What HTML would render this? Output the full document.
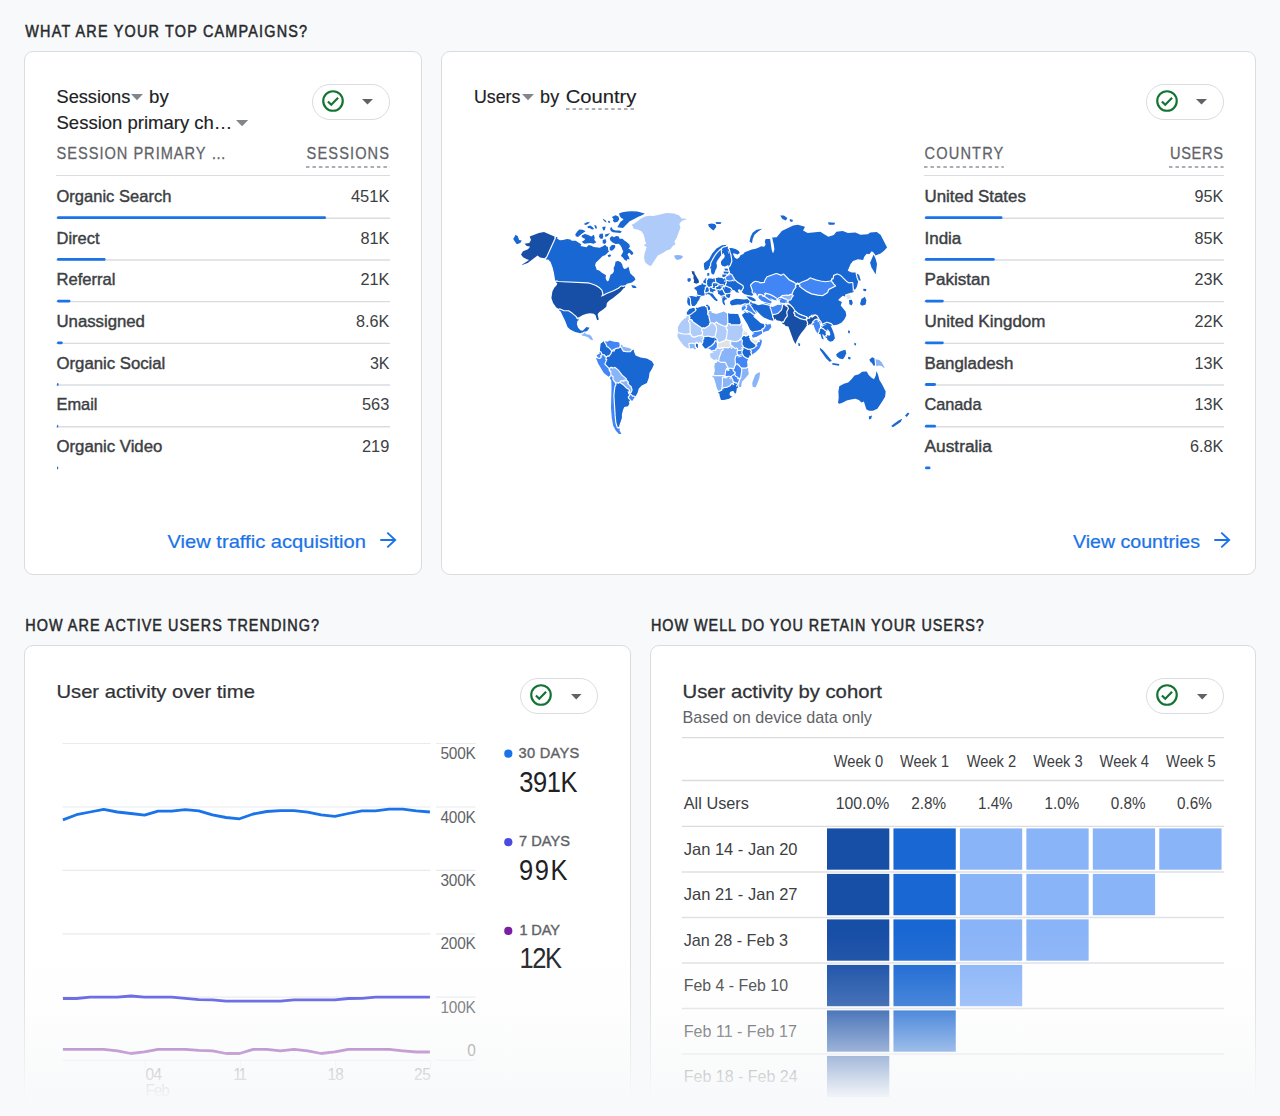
<!DOCTYPE html>
<html lang="en"><head><meta charset="utf-8"><title>Reports snapshot</title>
<meta name="viewport" content="width=1280">
<style>
html,body{margin:0;padding:0}
body{width:1280px;height:1116px;overflow:hidden;background:#f8f9fa;position:relative;font-family:"Liberation Sans",sans-serif;-webkit-font-smoothing:antialiased}
.t{position:absolute;white-space:pre;margin:0;padding:0;font-weight:400;display:block}
.r{position:absolute}
.card{position:absolute;background:#fff;border:1px solid #dadce0;border-radius:9px;box-sizing:border-box}
.pill{position:absolute;box-sizing:border-box;border:1px solid #dadce0;border-radius:18px;background:#fff}
svg{position:absolute;overflow:visible}
main,section,article{display:block;margin:0;padding:0}
</style></head>
<body>
<main>
<section aria-label="What are your top campaigns?">
<h2 class="t" style="left:25.30px;top:24px;font-size:14.4px;line-height:16px;height:16px;color:#27292d;letter-spacing:1.204px;-webkit-text-stroke:0.45px #27292d;transform:scaleY(1.12);transform-origin:0 13px;">WHAT ARE YOUR TOP CAMPAIGNS?</h2>
<article aria-label="Sessions by Session primary channel group">
<div class="card" style="left:24px;top:51px;width:398px;height:524px;"></div>
<span class="t" style="left:56.50px;top:87px;font-size:18.2px;line-height:20px;height:20px;color:#202124;-webkit-text-stroke:0.15px #202124;transform:scaleY(1.03);transform-origin:0 16px;">Sessions</span>
<svg style="left:131.1px;top:94px" width="12" height="6.2" viewBox="0 0 12 6.2"><path d="M0 0H12L6.0 6.2Z" fill="#80868b"/></svg>
<span class="t" style="left:149.10px;top:86px;font-size:18.7px;line-height:21px;height:21px;color:#202124;letter-spacing:-0.100px;-webkit-text-stroke:0.15px #202124;">by</span>
<span class="t" style="left:56.50px;top:112px;font-size:18.5px;line-height:21px;height:21px;color:#202124;-webkit-text-stroke:0.15px #202124;">Session primary ch…</span>
<svg style="left:236.4px;top:120px" width="12.2" height="6.3" viewBox="0 0 12.2 6.3"><path d="M0 0H12.2L6.1 6.3Z" fill="#80868b"/></svg>
<div class="pill" style="left:312px;top:84px;width:78px;height:36px"></div>
<svg style="left:320.40px;top:88.30px" width="26" height="26" viewBox="0 0 24 24"><circle cx="12" cy="12" r="9" fill="none" stroke="#137333" stroke-width="2"/><path d="M7.3 12.4l3.1 3.1 6.3-6.4" fill="none" stroke="#137333" stroke-width="2"/></svg>
<svg style="left:362.2px;top:99.4px" width="11" height="5.6" viewBox="0 0 11 5.6"><path d="M0 0H11L5.5 5.6Z" fill="#5f6368"/></svg>
<span class="t" style="left:56.50px;top:146px;font-size:14.6px;line-height:16px;height:16px;color:#5f6368;letter-spacing:0.994px;-webkit-text-stroke:0.25px #5f6368;transform:scaleY(1.075);transform-origin:0 13px;">SESSION PRIMARY …</span>
<span class="t" style="left:306.60px;top:146px;font-size:14.6px;line-height:16px;height:16px;color:#5f6368;letter-spacing:1.114px;-webkit-text-stroke:0.25px #5f6368;transform:scaleY(1.075);transform-origin:0 13px;">SESSIONS</span>
<svg style="left:306.0px;top:165.5px" width="84.0" height="2" ><line x1="0" y1="1" x2="84.0" y2="1" stroke="#8f959b" stroke-width="1.3" stroke-dasharray="3.5 2.95"/></svg>
<div class="r" style="left:56px;top:175px;width:334px;height:1px;background:#dadce0;"></div>
<span class="t" style="left:56.50px;top:187px;font-size:16.5px;line-height:18px;height:18px;color:#3c4043;letter-spacing:0.015px;-webkit-text-stroke:0.42px #3c4043;">Organic Search</span>
<span class="t" style="left:350.90px;top:187px;font-size:16.5px;line-height:18px;height:18px;color:#3c4043;">451K</span>
<svg style="left:0;top:0" width="1280" height="600" viewBox="0 0 1280 600"><path d="M56 218.25H390" stroke="#dadce0" stroke-width="1.4" fill="none"/><rect x="57" y="216.30" width="269.0" height="2.8" rx="1.40" fill="#1a73e8"/></svg>
<span class="t" style="left:56.50px;top:229px;font-size:16.5px;line-height:18px;height:18px;color:#3c4043;letter-spacing:-0.020px;-webkit-text-stroke:0.42px #3c4043;">Direct</span>
<span class="t" style="left:360.40px;top:229px;font-size:16.3px;line-height:18px;height:18px;color:#3c4043;">81K</span>
<svg style="left:0;top:0" width="1280" height="600" viewBox="0 0 1280 600"><path d="M56 259.95H390" stroke="#dadce0" stroke-width="1.4" fill="none"/><rect x="57" y="258.00" width="48.6" height="2.8" rx="1.40" fill="#1a73e8"/></svg>
<span class="t" style="left:56.50px;top:270px;font-size:16.6px;line-height:19px;height:19px;color:#3c4043;-webkit-text-stroke:0.42px #3c4043;">Referral</span>
<span class="t" style="left:360.40px;top:270px;font-size:16.3px;line-height:18px;height:18px;color:#3c4043;">21K</span>
<svg style="left:0;top:0" width="1280" height="600" viewBox="0 0 1280 600"><path d="M56 301.65H390" stroke="#dadce0" stroke-width="1.4" fill="none"/><rect x="57" y="299.70" width="13.5" height="2.8" rx="1.40" fill="#1a73e8"/></svg>
<span class="t" style="left:56.50px;top:312px;font-size:16.8px;line-height:19px;height:19px;color:#3c4043;letter-spacing:-0.022px;-webkit-text-stroke:0.42px #3c4043;transform:scaleY(0.978);transform-origin:0 15px;">Unassigned</span>
<span class="t" style="left:356.00px;top:312px;font-size:16.2px;line-height:18px;height:18px;color:#3c4043;letter-spacing:0.033px;">8.6K</span>
<svg style="left:0;top:0" width="1280" height="600" viewBox="0 0 1280 600"><path d="M56 343.35H390" stroke="#dadce0" stroke-width="1.4" fill="none"/><rect x="57" y="341.40" width="5.8" height="2.8" rx="1.40" fill="#1a73e8"/></svg>
<span class="t" style="left:56.50px;top:354px;font-size:16.8px;line-height:19px;height:19px;color:#3c4043;letter-spacing:-0.023px;-webkit-text-stroke:0.42px #3c4043;transform:scaleY(0.978);transform-origin:0 15px;">Organic Social</span>
<span class="t" style="left:370.00px;top:355px;font-size:16px;line-height:17px;height:17px;color:#3c4043;letter-spacing:-0.200px;">3K</span>
<svg style="left:0;top:0" width="1280" height="600" viewBox="0 0 1280 600"><path d="M56 385.05H390" stroke="#dadce0" stroke-width="1.4" fill="none"/><rect x="57" y="383.10" width="1.6" height="2.8" rx="0.80" fill="#1a73e8"/></svg>
<span class="t" style="left:56.50px;top:395px;font-size:16.4px;line-height:18px;height:18px;color:#3c4043;-webkit-text-stroke:0.42px #3c4043;">Email</span>
<span class="t" style="left:362.00px;top:395px;font-size:16.4px;line-height:18px;height:18px;color:#3c4043;">563</span>
<svg style="left:0;top:0" width="1280" height="600" viewBox="0 0 1280 600"><path d="M56 426.75H390" stroke="#dadce0" stroke-width="1.4" fill="none"/><rect x="57" y="424.80" width="1.2" height="2.8" rx="0.60" fill="#1a73e8"/></svg>
<span class="t" style="left:56.50px;top:437px;font-size:16.8px;line-height:19px;height:19px;color:#3c4043;letter-spacing:-0.017px;-webkit-text-stroke:0.42px #3c4043;transform:scaleY(0.978);transform-origin:0 15px;">Organic Video</span>
<span class="t" style="left:362.00px;top:437px;font-size:16.4px;line-height:18px;height:18px;color:#3c4043;">219</span>
<svg style="left:0;top:0" width="1280" height="600" viewBox="0 0 1280 600"><rect x="57" y="466.50" width="1.2" height="2.8" rx="0.60" fill="#1a73e8"/></svg>
<a class="t" style="left:167.50px;top:530px;font-size:20.1px;line-height:22px;height:22px;color:#1a73e8;letter-spacing:0.017px;-webkit-text-stroke:0.25px #1a73e8;transform:scaleY(0.933);transform-origin:0 18px;">View traffic acquisition</a>
<svg style="left:380.0px;top:531.7px" width="16" height="16" viewBox="0 0 16 16"><path d="M0.3 8H14.8M7.3 0.6L15.2 8L7.3 15.4" fill="none" stroke="#1a73e8" stroke-width="1.9"/></svg>
</article>
<article aria-label="Users by Country">
<div class="card" style="left:441px;top:51px;width:815px;height:524px;"></div>
<span class="t" style="left:474.00px;top:87px;font-size:17.8px;line-height:20px;height:20px;color:#202124;letter-spacing:-0.025px;-webkit-text-stroke:0.15px #202124;transform:scaleY(1.053);transform-origin:0 16px;">Users</span>
<svg style="left:522.4px;top:94px" width="12" height="6.2" viewBox="0 0 12 6.2"><path d="M0 0H12L6.0 6.2Z" fill="#80868b"/></svg>
<span class="t" style="left:540.00px;top:87px;font-size:18px;line-height:20px;height:20px;color:#202124;letter-spacing:0.300px;-webkit-text-stroke:0.15px #202124;">by</span>
<span class="t" style="left:565.80px;top:85px;font-size:20.2px;line-height:22px;height:22px;color:#202124;letter-spacing:-0.017px;-webkit-text-stroke:0.15px #202124;transform:scaleY(0.928);transform-origin:0 18px;">Country</span>
<svg style="left:565.5px;top:107.9px" width="70.9" height="2" ><line x1="0" y1="1" x2="70.9" y2="1" stroke="#8f959b" stroke-width="1.3" stroke-dasharray="3.5 2.95"/></svg>
<div class="pill" style="left:1146px;top:84px;width:78px;height:36px"></div>
<svg style="left:1154.40px;top:88.30px" width="26" height="26" viewBox="0 0 24 24"><circle cx="12" cy="12" r="9" fill="none" stroke="#137333" stroke-width="2"/><path d="M7.3 12.4l3.1 3.1 6.3-6.4" fill="none" stroke="#137333" stroke-width="2"/></svg>
<svg style="left:1196.2px;top:99.4px" width="11" height="5.6" viewBox="0 0 11 5.6"><path d="M0 0H11L5.5 5.6Z" fill="#5f6368"/></svg>
<span class="t" style="left:924.50px;top:146px;font-size:14.6px;line-height:16px;height:16px;color:#5f6368;letter-spacing:1.150px;-webkit-text-stroke:0.25px #5f6368;transform:scaleY(1.075);transform-origin:0 13px;">COUNTRY</span>
<span class="t" style="left:1170.00px;top:146px;font-size:14.6px;line-height:16px;height:16px;color:#5f6368;letter-spacing:0.675px;-webkit-text-stroke:0.25px #5f6368;transform:scaleY(1.075);transform-origin:0 13px;">USERS</span>
<svg style="left:924px;top:165.5px" width="79.8" height="2" ><line x1="0" y1="1" x2="79.8" y2="1" stroke="#8f959b" stroke-width="1.3" stroke-dasharray="3.5 2.95"/></svg>
<svg style="left:1169.4px;top:165.5px" width="54.6" height="2" ><line x1="0" y1="1" x2="54.6" y2="1" stroke="#8f959b" stroke-width="1.3" stroke-dasharray="3.5 2.95"/></svg>
<div class="r" style="left:924px;top:175px;width:300px;height:1px;background:#dadce0;"></div>
<span class="t" style="left:924.50px;top:187px;font-size:16.9px;line-height:19px;height:19px;color:#3c4043;-webkit-text-stroke:0.42px #3c4043;transform:scaleY(0.972);transform-origin:0 15px;">United States</span>
<span class="t" style="left:1194.50px;top:187px;font-size:16.2px;line-height:18px;height:18px;color:#3c4043;letter-spacing:0.050px;">95K</span>
<svg style="left:0;top:0" width="1280" height="600" viewBox="0 0 1280 600"><path d="M924 218.25H1224" stroke="#dadce0" stroke-width="1.4" fill="none"/><rect x="925" y="216.30" width="77.5" height="2.8" rx="1.40" fill="#1a73e8"/></svg>
<span class="t" style="left:924.50px;top:229px;font-size:17.0px;line-height:19px;height:19px;color:#3c4043;letter-spacing:-0.025px;-webkit-text-stroke:0.42px #3c4043;transform:scaleY(0.966);transform-origin:0 15px;">India</span>
<span class="t" style="left:1194.50px;top:229px;font-size:16.2px;line-height:18px;height:18px;color:#3c4043;letter-spacing:0.050px;">85K</span>
<svg style="left:0;top:0" width="1280" height="600" viewBox="0 0 1280 600"><path d="M924 259.95H1224" stroke="#dadce0" stroke-width="1.4" fill="none"/><rect x="925" y="258.00" width="69.8" height="2.8" rx="1.40" fill="#1a73e8"/></svg>
<span class="t" style="left:924.50px;top:270px;font-size:17.1px;line-height:19px;height:19px;color:#3c4043;letter-spacing:-0.014px;-webkit-text-stroke:0.42px #3c4043;transform:scaleY(0.96);transform-origin:0 15px;">Pakistan</span>
<span class="t" style="left:1194.50px;top:270px;font-size:16.2px;line-height:18px;height:18px;color:#3c4043;letter-spacing:0.050px;">23K</span>
<svg style="left:0;top:0" width="1280" height="600" viewBox="0 0 1280 600"><path d="M924 301.65H1224" stroke="#dadce0" stroke-width="1.4" fill="none"/><rect x="925" y="299.70" width="18.8" height="2.8" rx="1.40" fill="#1a73e8"/></svg>
<span class="t" style="left:924.50px;top:312px;font-size:17.0px;line-height:19px;height:19px;color:#3c4043;-webkit-text-stroke:0.42px #3c4043;transform:scaleY(0.966);transform-origin:0 15px;">United Kingdom</span>
<span class="t" style="left:1194.50px;top:312px;font-size:16.2px;line-height:18px;height:18px;color:#3c4043;letter-spacing:0.050px;">22K</span>
<svg style="left:0;top:0" width="1280" height="600" viewBox="0 0 1280 600"><path d="M924 343.35H1224" stroke="#dadce0" stroke-width="1.4" fill="none"/><rect x="925" y="341.40" width="18.8" height="2.8" rx="1.40" fill="#1a73e8"/></svg>
<span class="t" style="left:924.50px;top:354px;font-size:16.9px;line-height:19px;height:19px;color:#3c4043;letter-spacing:-0.033px;-webkit-text-stroke:0.42px #3c4043;transform:scaleY(0.972);transform-origin:0 15px;">Bangladesh</span>
<span class="t" style="left:1194.50px;top:354px;font-size:16.2px;line-height:18px;height:18px;color:#3c4043;letter-spacing:0.050px;">13K</span>
<svg style="left:0;top:0" width="1280" height="600" viewBox="0 0 1280 600"><path d="M924 385.05H1224" stroke="#dadce0" stroke-width="1.4" fill="none"/><rect x="925" y="383.10" width="11.0" height="2.8" rx="1.40" fill="#1a73e8"/></svg>
<span class="t" style="left:924.50px;top:395px;font-size:16.3px;line-height:18px;height:18px;color:#3c4043;letter-spacing:-0.020px;-webkit-text-stroke:0.42px #3c4043;">Canada</span>
<span class="t" style="left:1194.50px;top:395px;font-size:16.2px;line-height:18px;height:18px;color:#3c4043;letter-spacing:0.050px;">13K</span>
<svg style="left:0;top:0" width="1280" height="600" viewBox="0 0 1280 600"><path d="M924 426.75H1224" stroke="#dadce0" stroke-width="1.4" fill="none"/><rect x="925" y="424.80" width="11.0" height="2.8" rx="1.40" fill="#1a73e8"/></svg>
<span class="t" style="left:924.50px;top:436px;font-size:17.3px;line-height:20px;height:20px;color:#3c4043;letter-spacing:0.012px;-webkit-text-stroke:0.42px #3c4043;transform:scaleY(0.949);transform-origin:0 16px;">Australia</span>
<span class="t" style="left:1190.00px;top:437px;font-size:16.2px;line-height:18px;height:18px;color:#3c4043;letter-spacing:0.033px;">6.8K</span>
<svg style="left:0;top:0" width="1280" height="600" viewBox="0 0 1280 600"><rect x="925" y="466.50" width="5.5" height="2.8" rx="1.40" fill="#1a73e8"/></svg>
<a class="t" style="left:1073.00px;top:530px;font-size:19.6px;line-height:22px;height:22px;color:#1a73e8;letter-spacing:-0.008px;-webkit-text-stroke:0.25px #1a73e8;transform:scaleY(0.957);transform-origin:0 18px;">View countries</a>
<svg style="left:1214.1px;top:531.7px" width="16" height="16" viewBox="0 0 16 16"><path d="M0.3 8H14.8M7.3 0.6L15.2 8L7.3 15.4" fill="none" stroke="#1a73e8" stroke-width="1.9"/></svg>
<svg style="left:0;top:0" width="1280" height="600" viewBox="0 0 1280 600" role="img" aria-label="World map of users by country"><g stroke="#fff" stroke-width="2.3" stroke-linejoin="round" paint-order="stroke"><path d="M515.6 234.7L513.2 238.9L514.8 241.6L516.8 244.3L520.3 242.9L521.8 240.6L519.1 239.9L517.8 236.2Z" fill="#1967d2"/><path d="M521.0 254.6L523.0 257.3L526.9 259.2L529.1 260.1L521.9 264.7L522.2 265.1L527.7 263.0L537.6 255.6L540.0 257.4L545.7 258.5L546.1 259.2L546.8 260.0L547.2 259.8L547.8 259.2L547.1 258.3L556.3 238.4L556.4 238.3L557.1 238.7L557.5 237.4L556.5 236.9L555.5 237.1L544.0 232.1L538.8 233.0L529.7 236.5L531.0 240.1L529.3 243.0L524.5 243.8L526.8 246.1L529.9 246.6L530.0 246.8L528.0 249.3L523.0 251.2Z" fill="#174ea6"/><path d="M545.8 258.5L546.0 259.1L546.8 260.0L547.9 259.3L550.6 261.9L552.7 267.8L553.9 272.8L555.2 280.5L556.6 281.4L556.1 282.6L557.3 283.3L557.6 282.5L587.9 283.5L590.2 284.1L595.5 286.1L600.0 289.5L602.2 294.1L599.8 296.8L599.9 297.0L602.4 296.7L604.7 295.3L612.8 292.1L618.4 289.2L621.0 287.0L623.9 287.6L624.0 287.8L623.7 288.2L624.3 288.0L625.3 287.1L624.4 286.2L626.9 283.7L631.9 282.5L635.4 279.8L634.5 277.2L632.5 275.6L630.2 273.3L628.5 266.7L626.3 268.5L624.2 269.1L622.8 267.1L622.4 264.7L620.8 262.3L618.3 261.0L615.6 261.5L614.8 265.5L613.6 267.9L614.0 271.1L612.9 273.2L610.5 274.8L608.9 280.3L607.7 281.5L606.4 280.3L605.6 278.1L606.0 275.2L601.6 272.4L599.2 270.4L596.6 269.7L596.2 267.9L595.1 265.2L595.8 262.7L602.7 256.1L605.1 255.3L609.2 251.2L608.3 249.9L607.9 247.1L606.3 246.3L605.0 243.5L603.5 245.9L599.8 247.7L593.7 247.0L591.4 245.8L588.8 245.0L586.4 247.3L580.6 246.0L580.5 245.8L581.5 244.5L575.7 240.7L571.8 240.7L570.3 239.6L567.0 239.1L563.1 239.9L560.0 240.3L557.2 238.7L557.5 237.4L556.8 237.0L556.0 237.0L555.5 237.2L556.1 237.4L556.2 237.6L546.6 258.6Z" fill="#1967d2"/><path d="M619.0 213.5L619.9 216.2L621.5 218.2L623.6 218.9L622.3 220.5L620.3 222.1L617.3 227.2L623.0 228.1L629.7 221.3L635.1 218.6L638.3 216.7L641.4 215.5L644.6 213.7L644.6 213.5L637.4 211.6L631.9 211.3L627.2 211.4L622.4 212.2Z" fill="#1967d2"/><path d="M611.9 217.1L613.6 219.2L612.8 220.8L614.6 222.6L617.6 221.7L619.3 219.2L618.4 216.6L615.5 215.3Z" fill="#1967d2"/><path d="M611.1 226.7L610.1 228.9L610.9 231.1L613.0 232.3L620.3 233.1L621.9 231.5L619.4 230.6L615.5 230.6L612.9 229.4Z" fill="#1967d2"/><path d="M575.3 234.3L575.8 236.2L578.0 237.1L582.8 233.1L585.6 231.2L582.7 229.8L579.4 229.4L577.7 231.1Z" fill="#1967d2"/><path d="M582.0 235.3L581.5 236.8L583.3 238.1L585.3 239.1L584.0 240.4L581.7 241.8L584.1 243.7L590.5 242.9L593.6 243.7L596.4 242.3L594.3 240.1L594.7 237.5L593.8 234.7L591.2 236.4L588.2 234.9L585.0 234.1Z" fill="#1967d2"/><path d="M583.6 223.9L585.8 224.9L588.3 223.7L589.9 222.1L589.8 221.9L586.9 222.2Z" fill="#1967d2"/><path d="M587.4 226.4L587.9 228.0L590.0 228.3L592.0 229.4L594.2 229.1L592.2 226.7L590.1 225.5Z" fill="#1967d2"/><path d="M594.3 225.0L595.3 228.6L597.1 228.4L596.2 225.5Z" fill="#1967d2"/><path d="M602.2 227.1L603.2 230.5L604.8 229.9L605.7 226.6Z" fill="#1967d2"/><path d="M602.8 219.1L604.3 221.3L606.4 222.4L606.6 222.2L605.5 220.2L603.0 218.8Z" fill="#1967d2"/><path d="M608.1 220.7L608.3 222.8L609.9 223.0L609.9 221.0Z" fill="#1967d2"/><path d="M599.6 234.1L599.1 236.4L600.0 238.5L602.4 239.0L603.3 236.8L602.8 233.6Z" fill="#1967d2"/><path d="M605.0 234.5L605.5 237.2L607.9 235.8L609.8 233.5L609.7 233.3Z" fill="#1967d2"/><path d="M602.7 240.0L602.7 243.2L605.0 244.1L606.4 241.8L605.5 239.1Z" fill="#1967d2"/><path d="M609.7 238.2L610.5 240.8L613.0 242.8L615.4 244.1L618.5 243.7L619.9 244.7L621.4 247.0L622.2 249.3L623.3 251.6L620.9 255.9L622.7 257.2L624.2 259.6L626.6 261.0L627.4 258.9L629.5 259.4L629.0 256.9L627.5 254.7L628.2 253.3L629.5 252.7L631.4 255.1L633.4 254.1L632.9 252.2L630.5 249.8L628.4 248.4L629.9 247.0L629.4 244.4L626.6 241.9L624.3 240.4L622.6 238.8L619.6 238.8L618.8 236.5L616.2 236.0L613.9 237.2L611.9 236.0Z" fill="#1967d2"/><path d="M609.7 247.5L609.7 250.2L612.0 250.7L614.1 249.0L615.4 246.9L614.9 245.0L611.8 245.0Z" fill="#1967d2"/><path d="M607.6 255.3L608.7 257.3L611.2 256.0L610.1 254.3Z" fill="#1967d2"/><path d="M631.2 285.0L632.8 288.1L636.7 288.1L635.1 285.7Z" fill="#1967d2"/><path d="M551.4 297.9L553.1 303.0L556.3 307.5L559.6 309.4L559.1 310.6L560.7 311.4L560.4 310.8L560.6 310.7L564.0 311.6L568.5 311.6L572.3 314.2L575.2 316.5L577.1 319.7L577.5 320.0L577.3 321.0L578.0 320.7L578.7 319.8L578.1 318.5L579.3 316.9L582.9 315.1L586.6 313.8L590.3 313.2L593.9 313.8L595.7 315.6L597.1 320.3L598.8 319.4L597.6 314.3L599.3 311.9L603.1 309.4L606.3 306.8L606.9 303.0L609.3 300.6L613.1 298.1L620.7 291.8L623.6 288.2L624.4 288.0L625.3 287.1L624.9 286.6L624.3 286.3L623.7 286.9L621.2 286.6L618.7 288.8L613.1 291.6L606.8 294.1L604.7 295.3L601.2 296.7L601.1 296.5L602.3 294.0L601.4 290.5L599.2 288.3L595.2 285.8L590.4 284.0L587.8 283.4L557.9 282.1L556.8 281.4L556.4 281.8L556.1 282.6L557.3 283.3L556.8 285.1L554.3 287.7L552.4 291.5Z" fill="#174ea6"/><path d="M559.1 310.6L560.7 311.5L562.5 315.6L565.0 320.6L567.5 326.9L570.1 329.5L575.2 332.0L580.2 333.3L581.4 333.9L581.6 334.5L582.7 335.9L583.4 335.8L583.9 335.4L583.1 334.4L583.4 333.9L584.9 334.0L585.2 333.6L586.3 332.9L584.6 332.7L584.5 332.5L587.4 330.7L589.6 327.8L586.5 327.0L582.7 330.8L580.5 330.2L578.1 327.8L576.9 324.2L577.3 321.1L578.0 320.7L578.7 319.8L578.1 318.5L577.4 319.4L577.2 319.5L575.5 316.7L575.1 316.3L572.0 313.8L568.3 311.3L563.9 311.3L559.8 309.5L559.2 310.0Z" fill="#1967d2"/><path d="M581.4 333.9L581.6 334.5L582.7 335.9L583.3 335.9L584.0 335.5L584.4 336.0L588.1 337.2L590.7 339.8L593.2 340.2L591.7 336.8L589.7 334.8L585.0 334.0L585.2 333.6L586.3 332.9L584.3 332.6L583.5 333.8L582.8 333.7L582.7 333.9L583.1 334.3L582.9 334.6Z" fill="#8ab4f8"/><path d="M631.4 224.9L632.8 226.3L633.6 228.8L637.3 229.6L641.1 231.1L643.3 233.7L644.5 237.6L645.3 241.5L646.3 243.6L643.8 245.3L646.7 247.0L644.5 253.8L644.1 257.8L644.9 261.9L647.3 264.3L650.8 266.3L652.9 262.9L657.8 255.4L662.8 253.0L666.6 250.5L670.4 249.2L672.3 246.6L675.6 244.0L674.3 241.4L676.7 237.8L680.5 227.6L679.3 223.9L681.7 221.0L686.5 219.2L686.4 218.8L681.6 218.5L679.2 215.4L674.0 213.5L666.4 212.9L653.5 216.1L649.0 215.7L645.1 216.5L641.1 218.5L634.8 223.2Z" fill="#aecbfa"/><path d="M674.2 255.6L674.9 257.9L677.0 259.9L680.4 259.3L683.2 257.1L681.6 255.6L677.7 254.9Z" fill="#8ab4f8"/><path d="M708.1 224.2L708.8 226.5L710.8 228.5L713.5 230.5L716.3 227.0L715.6 224.2L711.6 223.5Z" fill="#1967d2"/><path d="M715.5 222.0L716.4 224.1L720.6 224.1L721.5 222.3Z" fill="#1967d2"/><path d="M749.5 241.5L752.0 243.2L752.7 239.0L754.5 234.7L758.2 231.6L761.8 229.0L761.6 228.7L756.6 229.8L752.8 232.4L750.8 236.3Z" fill="#1967d2"/><path d="M780.2 215.4L782.4 219.1L785.8 220.4L787.4 218.1L783.9 215.4Z" fill="#1967d2"/><path d="M789.8 219.1L789.8 221.3L792.2 221.9L793.0 219.9Z" fill="#1967d2"/><path d="M828.0 222.3L828.8 224.8L834.2 224.8L835.1 222.7Z" fill="#1967d2"/><path d="M726.2 248.4L726.8 248.3L727.6 250.3L728.5 251.0L729.1 255.3L729.5 256.3L730.3 260.3L729.9 263.2L728.7 264.4L728.0 266.6L728.7 266.3L729.4 265.5L729.6 265.6L729.3 266.5L728.9 269.7L729.7 273.0L731.1 274.7L730.9 274.8L728.8 273.9L730.6 276.1L731.4 276.5L733.0 279.0L732.8 279.8L733.5 280.9L735.0 282.4L739.5 284.3L740.5 284.9L742.3 286.3L742.8 287.8L740.4 289.2L740.1 289.8L740.2 290.5L741.5 290.3L742.2 292.5L744.7 294.2L747.9 295.0L751.1 296.2L753.4 294.8L752.8 292.4L754.5 293.9L754.0 292.1L754.1 291.7L753.2 290.6L753.4 290.0L752.2 287.6L751.5 285.4L753.2 283.2L755.1 282.1L758.0 282.5L759.9 283.7L765.3 283.1L765.9 280.4L767.7 277.4L776.3 274.4L781.4 276.2L783.2 275.1L788.7 280.5L793.7 283.1L796.3 284.8L796.1 285.6L795.8 286.0L797.1 286.9L797.7 287.0L798.4 286.8L799.5 285.7L799.1 285.4L798.8 284.7L799.1 284.3L802.8 282.5L807.8 280.6L810.2 278.8L815.1 280.6L820.2 281.9L825.2 282.5L830.3 281.8L832.2 281.1L832.9 282.2L834.0 281.6L834.5 281.2L834.2 280.0L833.7 279.3L834.5 275.9L837.6 275.0L842.8 278.8L847.7 283.7L848.9 283.6L849.7 284.0L852.3 283.5L852.5 287.8L851.8 291.4L850.9 292.3L851.6 292.7L852.5 292.6L854.0 291.2L856.9 286.7L858.2 281.6L857.5 276.4L855.5 272.5L851.7 272.5L847.7 270.7L850.6 264.1L853.0 261.1L857.9 259.3L863.1 259.9L864.4 256.6L866.7 253.7L869.3 254.3L871.7 251.3L873.3 252.3L875.3 255.6L880.6 253.6L883.8 251.0L887.1 247.5L880.7 234.9L876.8 232.1L870.3 232.6L867.8 234.2L860.5 234.8L855.4 232.6L847.9 232.9L842.8 231.1L836.4 231.7L833.8 234.9L828.4 236.7L824.2 234.3L820.3 231.7L807.7 232.9L803.1 230.6L805.0 226.8L797.7 224.8L793.2 225.4L781.8 231.1L776.7 237.3L772.2 237.4L772.7 240.1L773.8 244.8L774.4 249.3L773.5 252.6L772.9 252.9L772.7 252.8L771.7 250.1L770.1 238.9L765.7 238.9L764.8 241.6L765.6 244.6L764.2 246.7L761.2 246.3L758.8 247.5L755.7 248.7L751.8 249.5L744.7 252.2L743.1 254.2L740.7 255.0L739.2 257.4L737.0 259.1L734.9 257.7L733.4 255.1L733.1 253.4L733.3 253.3L734.6 253.6L737.5 254.4L739.8 253.0L738.8 251.1L735.6 249.1L731.6 247.9L728.2 248.3L727.9 247.5L728.0 247.0L726.8 247.3L726.3 247.8ZM734.9 280.9L733.9 280.4L734.3 279.8L735.1 280.8ZM728.9 250.0L729.1 249.8L729.7 250.3L730.1 253.7L729.9 253.7L729.6 252.8Z" fill="#1967d2"/><path d="M870.1 262.7L871.4 267.2L875.4 274.0L875.7 274.0L877.0 264.0L875.7 258.9L873.6 254.6Z" fill="#1967d2"/><path d="M856.8 273.6L857.6 277.3L858.9 280.6L860.8 280.6L859.1 275.1L857.0 273.5Z" fill="#1967d2"/><path d="M703.9 263.3L703.9 266.6L704.8 270.2L707.1 269.8L710.0 267.5L710.1 267.7L709.8 269.3L710.8 268.5L711.5 267.6L711.7 266.5L711.4 263.9L711.5 263.0L713.3 259.4L715.7 255.5L717.8 252.6L720.7 250.1L720.9 250.1L721.5 251.1L723.2 249.5L723.5 247.9L726.2 247.1L726.5 247.5L726.2 248.4L727.6 247.8L728.0 247.0L727.7 247.0L727.0 246.0L727.3 244.7L722.1 245.2L716.5 248.4L712.2 253.5L709.1 259.3Z" fill="#1967d2"/><path d="M709.8 269.3L711.1 268.1L711.3 268.2L710.9 270.1L711.4 273.4L713.3 274.8L714.6 272.9L715.4 270.2L716.6 268.2L717.0 265.8L716.3 263.1L717.4 260.5L721.3 255.0L721.9 252.9L722.1 253.0L722.8 254.5L723.4 252.4L723.2 251.4L721.8 249.0L721.0 249.8L720.7 249.7L717.7 252.7L715.4 255.8L713.1 259.7L711.5 262.7L711.3 263.4L711.1 265.9L710.3 267.0Z" fill="#1967d2"/><path d="M720.9 261.8L721.1 264.3L722.4 266.1L725.0 266.5L727.8 265.3L728.4 264.8L728.5 265.0L728.0 266.6L728.7 266.3L729.8 265.1L731.3 261.1L730.4 255.0L729.6 252.8L728.8 249.6L727.5 248.6L727.6 248.3L728.2 248.3L727.4 246.5L727.0 246.0L726.7 246.9L723.5 247.6L723.4 247.9L722.7 248.1L722.0 248.9L721.8 250.2L722.2 253.4L722.8 254.5L723.2 253.0L723.4 253.0L724.8 255.7L724.3 257.8L722.3 259.7ZM727.7 250.7L727.9 250.5L728.5 251.0L728.8 254.1L728.6 254.0L728.3 253.2ZM722.6 250.3L722.8 249.8L723.0 249.8L723.1 250.8L722.9 250.8Z" fill="#1967d2"/><path d="M724.6 268.6L724.9 271.2L728.1 271.2L727.9 268.8Z" fill="#1967d2"/><path d="M723.6 271.6L723.9 274.0L728.6 274.3L728.8 271.7Z" fill="#1967d2"/><path d="M722.2 274.6L722.5 277.2L726.2 277.4L726.4 274.6Z" fill="#1967d2"/><path d="M724.3 278.1L724.1 279.4L725.2 281.6L725.7 282.1L727.1 282.4L727.6 282.3L730.8 282.5L733.2 282.0L734.2 279.7L732.9 277.7L731.5 275.1L729.0 273.9L728.8 273.9L730.2 275.6L730.2 275.8L728.8 275.2L725.8 277.2L725.3 279.1ZM732.6 280.1L732.9 280.1L733.2 280.7L732.5 280.8ZM725.3 279.7L725.6 279.5L726.3 280.9L726.6 281.0L726.6 281.2L725.6 281.5Z" fill="#4285f4"/><path d="M723.7 286.2L724.9 285.3L725.0 286.3L725.3 286.6L724.1 287.2L724.2 287.3L725.6 287.9L726.1 287.7L729.4 289.0L729.9 289.9L731.7 291.1L732.0 291.2L731.1 289.5L731.2 289.3L732.2 289.9L734.5 290.3L736.1 292.2L739.1 292.7L739.1 292.6L737.8 290.8L738.4 289.5L740.1 289.2L740.2 290.5L741.1 290.3L741.5 290.2L741.4 289.9L742.9 287.6L742.4 285.9L736.9 282.4L735.7 281.3L734.1 280.6L732.3 280.9L732.1 281.3L728.8 281.6L727.1 281.1L724.4 282.0L724.4 282.6L723.7 284.5ZM733.6 282.0L733.4 281.8L733.7 281.2L734.3 281.8L734.2 282.0ZM725.7 282.3L725.9 282.1L726.7 282.5L725.9 282.8Z" fill="#1967d2"/><path d="M713.6 277.9L713.5 278.6L714.0 282.6L714.5 283.4L717.6 285.3L720.3 286.1L723.7 286.1L724.3 285.9L724.6 285.5L725.0 284.7L725.0 283.2L725.7 282.9L725.7 282.6L725.3 279.3L724.3 278.1L724.0 279.6L722.3 278.0L718.3 277.6L714.7 278.6ZM724.1 280.1L724.4 280.0L725.2 281.6L725.1 281.7L724.4 281.9ZM723.6 284.8L723.7 285.0L723.7 285.7L723.6 285.8L722.6 285.3L720.0 285.4L719.0 284.6L719.2 284.4L720.6 284.8ZM715.2 282.9L715.5 282.5L716.3 283.2L715.3 283.2Z" fill="#1967d2"/><path d="M704.5 284.2L704.7 285.2L706.0 287.8L706.4 288.2L707.4 288.7L707.5 288.6L708.5 288.3L709.5 288.5L709.7 289.5L708.9 289.6L709.0 289.6L712.5 289.2L712.5 288.5L713.7 288.3L715.0 286.9L713.5 286.7L713.9 286.2L713.4 284.4L713.5 284.3L714.7 284.4L714.6 283.9L715.3 282.5L714.6 278.6L714.3 278.2L713.6 277.9L713.5 279.2L711.3 278.4L708.4 278.4L706.9 279.1L706.0 278.3L705.7 278.3L705.3 278.5L704.7 279.1L704.5 280.0L705.5 279.6L705.7 279.7L705.8 280.5L705.5 282.2L705.7 283.4L705.1 284.5ZM713.8 282.7L714.0 282.7L714.0 282.9L713.8 283.0Z" fill="#1967d2"/><path d="M707.0 273.4L707.5 275.9L709.4 275.4L709.2 272.8Z" fill="#1967d2"/><path d="M701.5 283.5L701.4 284.2L701.7 284.7L702.7 284.6L705.2 286.3L705.3 286.5L705.6 286.4L706.2 285.3L705.9 284.6L705.7 283.5L706.1 282.6L705.8 280.4L705.9 279.6L706.9 279.2L706.6 278.7L705.7 278.3L705.0 278.7L704.7 279.2L704.5 280.0L703.6 280.4L702.9 283.2Z" fill="#1967d2"/><path d="M693.9 288.0L696.9 290.9L697.3 294.0L698.0 295.7L697.8 295.8L696.5 295.6L697.2 297.0L699.0 297.4L701.1 297.1L700.7 296.6L699.8 296.2L699.8 296.0L704.4 295.4L705.5 293.9L706.2 295.1L706.9 294.2L707.0 293.7L706.7 292.5L706.8 292.3L706.7 290.7L706.1 290.8L705.9 289.2L706.0 289.0L707.1 288.7L707.4 288.7L707.3 287.9L706.2 285.4L704.5 284.2L704.6 285.0L704.4 285.1L702.8 283.9L702.8 283.3L701.5 283.5L701.6 284.8L699.8 285.0Z" fill="#1967d2"/><path d="M687.2 297.4L688.0 298.7L689.5 298.8L689.9 301.0L689.9 304.2L688.6 304.7L688.9 305.5L689.3 305.8L690.8 305.4L691.6 305.9L694.6 305.9L696.7 303.8L697.8 301.5L699.4 299.5L699.9 297.6L699.7 297.3L701.1 297.1L700.7 296.6L700.3 296.3L699.0 296.1L698.2 296.2L698.0 295.9L696.5 295.6L697.0 296.8L696.9 297.0L691.7 295.9L688.1 296.4L688.5 297.3Z" fill="#1967d2"/><path d="M687.1 302.1L688.0 304.8L688.5 304.7L688.8 305.4L689.3 305.8L690.8 305.3L689.9 304.5L690.1 304.3L689.8 298.7L689.4 298.6L688.7 297.4L687.2 297.4L687.8 298.5L687.5 298.7Z" fill="#1967d2"/><path d="M691.7 270.9L692.2 273.7L693.6 275.6L693.4 278.3L694.1 280.3L693.7 282.8L696.4 283.7L699.1 282.4L698.6 280.1L697.1 277.7L694.7 273.5L694.3 271.4Z" fill="#174ea6"/><path d="M687.5 278.4L687.5 280.7L689.0 282.2L690.9 280.3L690.4 277.9Z" fill="#1967d2"/><path d="M705.3 291.9L705.8 294.5L706.2 295.1L707.0 294.1L709.5 294.6L714.6 300.0L716.8 301.3L717.9 300.2L716.2 298.4L714.2 296.1L712.7 293.8L712.3 292.4L713.6 292.4L713.2 291.0L712.7 291.0L712.6 290.2L709.5 289.6L708.9 289.6L709.7 289.7L710.0 290.9L709.2 290.9L708.5 291.2L706.8 291.0L706.7 290.7L705.7 291.2Z" fill="#1967d2"/><path d="M705.3 290.8L705.3 291.9L706.0 292.2L706.8 292.3L706.9 292.0L708.5 291.3L709.9 291.0L710.1 291.0L710.3 291.7L710.8 292.1L711.8 291.9L712.6 291.2L712.7 290.3L711.4 289.9L711.2 289.5L712.5 289.2L712.3 288.3L711.8 287.7L711.1 287.5L710.3 287.7L709.7 288.3L709.3 288.4L707.4 287.2L705.8 287.7L706.1 288.5Z" fill="#1967d2"/><path d="M709.6 288.5L710.2 291.5L710.8 292.1L712.0 291.8L712.2 292.3L713.6 292.4L713.3 291.1L716.6 290.7L717.1 291.1L717.0 291.9L717.7 291.3L718.1 290.0L717.6 289.8L717.4 288.4L718.2 287.9L717.4 287.3L715.9 287.1L715.9 287.4L715.7 287.5L714.9 287.2L715.0 286.9L714.1 286.9L712.2 287.3L712.4 287.7L712.2 287.9L711.1 287.5L710.1 287.8ZM710.6 289.8L710.6 289.5L711.0 289.5L711.0 289.8Z" fill="#1967d2"/><path d="M712.2 287.3L712.7 287.8L713.8 288.2L714.4 288.1L716.0 288.4L716.2 288.9L718.2 287.9L717.8 287.5L717.2 287.3L717.2 287.0L720.0 286.8L720.2 285.9L719.7 285.1L716.8 283.4L713.6 283.0L713.1 283.8L713.2 284.1L712.8 284.2L713.3 286.8L713.0 287.1ZM714.6 284.0L714.9 283.7L715.8 284.4L714.8 284.4Z" fill="#1967d2"/><path d="M715.9 287.1L716.1 288.9L716.9 288.6L717.0 288.7L716.6 290.6L717.0 291.0L718.4 291.5L718.5 291.3L721.1 290.5L721.5 291.0L721.5 291.4L723.0 290.8L723.1 289.0L724.1 288.6L723.9 287.3L722.7 287.7L722.4 286.6L720.1 286.6L720.3 286.1L723.7 286.2L723.3 285.6L722.7 285.3L718.1 285.6L718.7 286.0L718.7 286.2L716.7 287.2Z" fill="#1967d2"/><path d="M721.5 291.4L721.8 291.4L722.8 293.0L723.4 294.3L725.6 295.5L728.4 294.8L729.4 295.2L730.6 294.8L730.9 294.5L729.8 293.9L730.7 291.5L730.1 290.3L730.4 290.2L732.0 291.2L730.9 289.0L729.9 288.3L725.6 286.5L724.0 287.2L725.4 287.9L724.3 288.5L724.1 288.4L723.9 287.3L722.6 287.8L722.9 289.4L722.3 289.7L721.7 289.3ZM724.8 294.3L724.5 293.7L724.6 293.5L725.5 294.0L725.4 294.2Z" fill="#1967d2"/><path d="M723.6 297.7L725.1 297.5L725.6 299.1L726.2 299.4L726.9 299.4L726.7 298.1L729.4 297.7L730.4 295.7L729.7 295.2L730.9 294.5L729.5 293.8L726.9 294.6L725.8 294.1L724.5 294.4L724.1 294.8L723.8 295.3L723.5 297.1ZM725.0 295.4L725.2 295.3L725.4 295.4L725.2 295.6Z" fill="#1967d2"/><path d="M717.0 291.9L717.7 291.3L718.3 291.5L717.9 293.7L719.7 294.5L721.3 296.2L723.7 295.8L723.6 296.4L721.8 296.7L721.1 297.5L724.1 296.9L724.9 296.3L725.0 295.4L724.3 293.4L722.8 291.3L722.9 290.8L721.7 289.3L721.6 289.9L719.9 290.7L718.2 290.0L717.8 290.2L717.3 290.7ZM723.4 294.6L723.6 294.4L724.0 294.7L723.8 295.2L723.6 295.2Z" fill="#1967d2"/><path d="M721.1 297.5L723.5 297.2L723.5 297.7L722.3 297.9L722.3 301.4L723.1 303.9L725.2 305.4L725.3 305.3L724.1 301.0L725.7 299.3L726.9 299.4L726.6 298.1L726.4 298.1L724.9 297.2L725.0 296.2L721.8 296.7Z" fill="#1967d2"/><path d="M730.1 303.8L731.8 305.6L734.7 305.1L737.8 304.4L741.0 304.8L744.1 304.0L747.2 304.4L750.3 303.6L750.3 304.0L747.6 304.8L744.5 304.4L740.9 306.1L744.2 305.3L747.3 305.7L750.6 304.8L751.1 304.4L751.5 303.6L751.5 301.6L750.3 302.0L750.2 300.4L748.0 299.1L744.1 299.5L736.2 298.7L732.2 299.9L730.1 301.6Z" fill="#1967d2"/><path d="M746.6 296.5L749.3 299.2L751.8 300.8L754.3 301.2L756.3 300.2L753.6 297.9L750.4 296.7L746.7 296.3Z" fill="#1967d2"/><path d="M740.9 306.1L744.2 305.3L746.4 305.6L746.3 306.0L744.8 305.7L741.8 307.0L741.8 310.2L744.1 310.6L745.4 309.8L746.2 310.8L747.4 310.0L746.9 309.6L747.7 306.2L748.8 305.8L748.5 305.3L748.0 304.9L744.8 304.4ZM743.6 311.9L744.6 311.8L745.9 311.0L744.8 311.0Z" fill="#4285f4"/><path d="M745.5 309.7L745.7 310.3L746.2 310.8L747.4 310.1L748.6 310.9L749.9 312.2L749.8 312.5L747.2 311.5L749.6 313.8L750.5 314.2L752.4 315.9L753.1 316.2L753.7 316.2L754.4 315.9L753.5 314.9L755.8 313.6L754.3 310.3L754.5 310.3L756.9 312.9L754.8 308.6L752.9 306.0L751.2 304.3L750.8 304.0L750.0 304.0L747.3 304.9L746.8 305.3L746.4 306.0L747.4 306.1L747.5 306.3L746.7 308.9ZM748.7 305.5L748.8 305.3L750.7 304.7L751.4 305.9L751.1 306.0L750.4 305.3L748.9 305.8Z" fill="#4285f4"/><path d="M750.2 303.5L751.7 306.5L752.9 307.8L753.7 309.4L755.4 311.4L756.9 312.9L755.4 309.8L755.5 309.6L761.0 315.2L763.8 317.6L769.8 320.0L773.2 320.8L774.0 318.6L774.2 318.6L774.8 319.9L775.4 318.1L774.6 316.6L774.8 316.4L774.2 314.8L773.5 315.3L773.3 315.2L772.0 311.3L772.0 307.3L771.3 306.2L770.5 307.3L769.3 305.4L765.2 304.1L761.2 304.5L758.1 305.3L755.1 303.8L751.6 302.9L751.5 301.6L750.8 301.7L750.3 302.2ZM751.3 304.4L751.5 303.7L751.7 303.7L752.4 305.2L752.2 305.3ZM763.4 303.0L764.0 303.3L770.5 304.9L769.8 304.2L765.6 302.9Z" fill="#1967d2"/><path d="M756.5 293.7L756.8 295.4L758.1 295.5L758.6 298.0L761.1 300.4L764.3 302.0L770.8 303.6L771.8 301.7L769.4 299.1L769.6 299.0L772.5 300.5L770.2 298.2L767.6 296.3L764.5 294.9L764.5 294.6L764.9 294.3L763.7 293.4L762.7 292.7L763.0 294.1L762.8 294.3L760.5 292.8L757.8 293.7L757.7 294.1L757.3 294.2ZM763.4 303.0L764.0 303.3L770.5 304.9L769.8 304.2L765.6 302.9Z" fill="#4285f4"/><path d="M762.7 292.7L763.3 295.5L763.9 295.2L766.8 297.3L769.8 299.2L772.5 300.5L770.2 298.3L770.2 298.0L773.6 299.7L777.0 300.5L777.5 299.5L778.3 299.3L778.4 299.4L778.5 300.4L779.3 299.0L779.3 298.3L779.0 297.7L777.6 298.1L771.6 293.6L767.5 292.0L764.0 292.9L764.1 293.3L763.9 293.4Z" fill="#4285f4"/><path d="M751.1 285.2L752.8 290.1L753.1 290.6L752.6 292.0L753.9 293.5L754.5 293.9L754.0 292.1L754.1 291.9L754.8 292.6L756.4 293.7L756.8 295.4L758.1 295.4L758.0 294.1L760.0 293.8L762.6 294.4L762.8 294.3L763.1 294.5L763.3 295.5L764.9 294.3L764.2 293.8L764.1 293.3L764.9 292.7L765.3 292.6L769.9 293.8L773.6 295.6L777.9 298.4L777.5 299.5L782.5 298.0L782.3 296.9L782.5 296.7L788.2 295.9L789.4 296.3L788.5 297.2L790.6 297.0L791.1 296.5L791.7 296.6L792.7 295.7L791.9 295.2L792.9 293.6L794.1 290.5L796.8 286.9L798.0 287.6L798.9 286.3L799.1 285.7L798.8 284.7L797.5 283.8L796.4 284.6L794.0 282.9L789.0 280.4L783.3 274.6L781.3 275.9L776.3 274.1L767.3 277.3L765.4 280.6L764.7 282.9L760.1 283.5L758.2 282.3L755.1 281.9L753.2 283.0ZM779.2 297.8L779.2 297.6L780.9 297.1L781.1 297.2L781.1 298.1L779.4 298.2Z" fill="#4285f4"/><path d="M796.1 285.7L796.5 286.5L798.0 287.6L798.8 286.7L806.6 292.2L811.5 294.7L817.8 295.9L822.7 296.6L827.8 293.5L829.2 290.4L836.4 286.4L836.4 286.2L836.8 286.0L835.8 285.2L834.1 281.7L834.5 281.2L834.2 280.0L833.9 279.6L833.3 279.3L832.3 279.4L832.1 280.9L830.4 281.6L825.5 282.3L820.5 281.6L815.6 280.4L810.4 278.5L807.8 280.4L802.8 282.3L798.6 284.5L797.5 283.8L796.4 284.8Z" fill="#4285f4"/><path d="M786.9 299.6L786.3 301.3L786.3 302.1L787.0 303.3L787.4 302.3L787.4 301.8L786.9 301.0L787.7 300.9L787.5 301.7L789.7 305.0L789.6 305.2L789.2 305.0L788.4 304.1L787.5 304.1L789.0 306.3L790.6 307.9L790.4 307.4L790.7 307.3L792.7 310.7L794.3 312.8L797.6 315.5L801.9 317.3L804.5 318.2L804.5 318.8L805.7 319.2L806.0 318.9L806.4 319.4L808.5 320.1L809.4 318.7L810.1 318.6L810.3 319.8L811.7 319.3L811.4 319.0L811.5 318.3L815.2 317.0L815.4 317.3L817.2 318.0L818.2 319.9L818.4 319.3L818.3 318.7L816.7 316.7L816.9 316.4L818.1 316.9L820.0 320.6L822.6 323.9L826.3 322.9L826.2 323.1L822.1 325.1L822.9 325.2L826.5 324.0L832.1 325.9L831.3 324.5L831.4 324.3L834.0 325.2L837.9 324.5L841.7 322.6L844.3 319.4L846.3 315.5L845.6 311.5L840.7 305.4L841.9 302.1L838.4 300.3L838.3 300.1L839.3 298.7L842.8 295.7L846.7 297.0L849.3 293.7L850.8 292.4L851.7 292.7L852.5 292.6L853.9 291.3L854.2 290.6L852.5 291.2L852.3 291.1L852.9 290.5L852.2 283.1L848.9 283.5L846.4 282.0L840.1 275.8L837.2 274.6L834.1 275.9L833.7 279.2L832.3 279.4L832.2 280.5L832.3 281.1L832.9 282.2L833.4 282.1L833.7 283.3L835.8 285.2L836.3 286.3L829.2 289.9L828.0 293.1L822.8 296.3L817.7 295.7L811.3 294.4L806.3 291.9L802.5 289.3L798.8 286.6L799.5 285.7L798.2 284.8L797.5 284.6L796.8 284.9L795.8 286.0L796.8 286.9L794.2 290.2L792.7 293.8L791.3 295.2L790.4 295.0L790.1 295.6L788.5 297.2L790.2 297.0L790.3 297.3L788.6 299.0L788.4 299.5ZM807.4 318.7L807.5 318.5L807.9 318.6L807.7 318.9ZM818.5 320.6L819.0 321.4L821.1 324.1L820.2 321.6Z" fill="#1967d2"/><path d="M781.1 297.0L781.5 299.4L784.6 299.5L785.4 300.9L787.8 300.9L788.4 299.5L790.3 299.4L791.8 296.5L792.7 295.7L792.2 295.4L790.4 295.0L789.9 295.8L788.3 295.9L787.0 295.7L782.3 296.1L782.3 296.7ZM786.7 299.6L786.9 299.8L786.6 300.2L786.3 299.7Z" fill="#8ab4f8"/><path d="M778.5 300.4L779.3 299.0L781.2 298.4L781.3 299.4L779.7 299.4L780.0 302.5L783.0 303.7L783.1 303.9L779.4 303.6L782.9 305.1L783.6 305.1L784.7 304.6L784.4 304.6L783.9 304.2L783.3 304.1L783.3 303.8L786.2 302.3L787.0 303.3L787.4 302.7L787.3 301.9L786.2 299.6L785.7 299.7L782.6 298.7L782.5 298.1L779.7 298.1L779.1 298.3L778.5 299.1ZM786.3 301.0L786.2 302.2L786.0 302.1L785.6 301.0Z" fill="#4285f4"/><path d="M770.7 307.7L771.3 308.7L773.2 315.7L773.2 316.5L773.2 316.7L773.6 316.7L774.8 316.4L774.8 316.0L778.4 314.2L782.1 310.5L784.0 306.1L784.5 305.9L784.6 305.1L784.3 304.5L783.7 304.2L779.4 303.6L782.6 305.0L782.7 305.2L777.9 304.7L772.1 307.3L771.3 306.2L770.8 306.8Z" fill="#4285f4"/><path d="M773.2 316.7L773.6 316.8L774.0 318.3L774.8 319.9L775.3 318.5L775.5 318.5L776.5 320.3L780.4 321.0L782.5 322.3L782.3 323.1L782.4 323.7L783.4 324.3L784.3 324.2L783.7 323.2L785.8 319.3L788.0 316.4L787.4 312.0L789.3 308.2L788.4 306.2L789.1 306.4L790.6 307.9L788.9 304.5L788.3 304.1L787.5 304.1L787.7 304.4L787.0 304.8L786.4 305.6L784.8 305.9L784.6 305.8L784.5 304.8L784.7 304.6L783.2 305.0L782.9 305.3L783.3 305.6L782.0 310.2L778.1 314.1L774.5 315.1L774.2 314.8L773.6 315.1L773.1 315.9Z" fill="#174ea6"/><path d="M782.4 323.7L783.4 324.3L784.3 324.2L785.5 326.0L788.4 326.6L793.4 340.3L795.5 343.9L797.0 340.3L798.9 336.5L801.4 332.8L804.5 329.0L806.4 325.9L807.6 324.7L808.9 325.2L809.5 324.6L809.7 324.1L808.7 323.7L808.0 321.1L808.5 320.1L807.2 318.3L806.1 317.9L806.2 317.3L802.3 316.1L798.2 314.3L794.9 311.6L792.6 308.1L790.0 305.4L787.9 304.4L787.1 304.7L786.4 305.6L787.9 305.4L788.0 305.7L787.7 306.0L789.1 308.2L787.3 311.9L787.9 316.2L785.7 319.0L783.8 322.9L782.6 322.4L782.3 323.1ZM807.1 319.6L807.2 319.9L806.9 320.1L806.6 319.6ZM802.4 316.5L802.3 316.3L802.5 316.2L804.8 317.1L804.8 317.4L804.7 317.5L803.8 317.2Z" fill="#174ea6"/><path d="M794.3 312.8L795.4 313.7L795.2 315.3L799.8 317.8L804.4 319.2L804.6 318.8L805.7 319.2L806.2 317.3L802.3 316.1L798.3 314.3L795.2 311.8L794.7 312.1Z" fill="#1967d2"/><path d="M810.3 317.2L810.1 319.0L810.3 319.8L811.7 319.4L813.2 321.1L814.5 320.6L814.6 320.6L813.1 322.3L813.6 322.3L816.3 321.2L816.9 320.6L817.0 319.3L816.7 319.7L815.7 319.6L815.6 317.4L817.0 319.0L816.6 316.3L815.9 315.8L815.4 315.7L811.8 315.8L811.6 316.9Z" fill="#174ea6"/><path d="M807.0 320.2L807.7 321.2L808.4 323.9L807.7 324.6L807.8 324.8L808.9 325.2L809.7 324.1L811.5 324.5L812.2 324.1L812.6 325.4L813.7 324.6L813.6 323.7L815.8 321.4L816.6 321.1L817.1 321.3L817.9 320.3L817.1 319.8L816.9 317.9L817.2 318.0L818.2 319.9L818.4 319.1L818.2 318.5L816.2 316.1L815.2 315.7L814.8 315.8L814.9 316.0L812.8 317.6L811.7 318.0L811.5 317.8L811.7 316.9L810.3 317.2L810.1 318.5L808.9 318.9L807.9 318.6Z" fill="#174ea6"/><path d="M798.3 342.8L798.3 345.6L799.9 346.2L800.2 343.7Z" fill="#1967d2"/><path d="M741.8 315.0L747.6 324.6L750.1 329.7L753.4 332.3L754.0 332.3L753.9 332.5L752.5 333.2L752.8 333.5L753.4 333.6L755.1 333.4L757.8 332.1L762.8 330.8L763.1 331.4L762.9 331.8L763.5 331.6L764.7 330.8L764.2 329.6L767.0 327.7L766.0 325.7L766.5 324.8L767.0 324.7L766.5 323.9L765.9 323.7L765.0 324.6L760.5 322.9L753.2 316.5L753.2 316.3L753.9 316.2L754.4 315.9L750.3 312.7L747.2 311.5L749.1 313.4L749.1 313.6L745.3 312.2ZM743.6 311.9L744.6 311.8L745.9 311.0L744.8 311.0Z" fill="#1967d2"/><path d="M751.9 335.0L752.6 337.8L756.7 336.7L761.9 333.8L762.9 331.8L763.2 331.8L763.8 332.8L764.5 331.5L764.4 331.1L764.7 330.8L764.6 330.3L764.1 329.7L763.1 329.4L762.5 329.6L762.6 330.5L757.9 331.7L754.7 332.1L752.5 333.2L753.2 333.6L754.2 333.5L754.3 333.8Z" fill="#4285f4"/><path d="M762.5 329.6L763.4 332.3L763.8 332.8L764.4 331.7L768.7 330.4L771.4 327.0L770.6 324.1L767.1 324.7L766.4 323.8L766.0 323.6L765.8 323.7L765.1 324.6L765.6 324.9L766.0 325.7L763.8 329.4Z" fill="#4285f4"/><path d="M812.3 324.0L812.6 325.4L813.6 324.7L813.8 324.8L814.2 327.0L815.5 330.2L817.5 333.6L818.7 333.1L819.1 334.3L819.9 333.8L820.2 333.5L819.9 331.7L821.8 328.8L821.7 328.5L822.8 328.1L821.6 325.6L821.4 326.3L821.6 327.1L821.0 327.3L820.4 326.2L819.1 322.3L817.2 321.3L817.9 320.3L816.7 319.7L815.8 319.8L815.7 320.0L815.1 320.3L813.1 322.3L814.7 321.9L814.7 322.1L814.4 322.5ZM818.5 320.6L819.0 321.4L821.1 324.1L820.2 321.6Z" fill="#4285f4"/><path d="M818.8 333.0L819.1 334.3L820.1 333.7L820.3 333.7L821.8 338.4L823.6 339.4L823.7 339.3L822.4 335.1L822.7 334.0L822.9 334.1L824.4 336.0L825.4 336.3L825.6 337.6L827.0 338.0L826.8 336.8L827.5 336.8L827.6 336.5L828.8 336.1L828.1 334.9L826.8 335.3L825.5 333.2L826.1 330.6L825.8 330.2L826.0 330.1L827.4 330.9L827.2 329.9L826.0 328.6L823.1 326.6L821.0 327.4L821.5 328.5L819.9 329.2L819.8 331.7L819.1 332.8Z" fill="#1967d2"/><path d="M821.6 325.6L821.4 326.5L821.9 327.3L822.9 328.0L823.4 327.9L825.2 329.7L827.4 330.9L827.3 330.1L826.6 329.1L826.8 329.0L828.1 329.7L829.9 332.1L830.4 335.0L828.8 336.0L828.1 334.9L826.8 335.4L827.4 336.5L827.0 336.7L825.5 336.3L825.4 336.8L825.6 337.6L827.0 338.0L827.4 339.7L830.1 341.7L832.9 341.0L834.9 338.3L834.2 334.4L832.3 329.3L830.5 325.6L830.7 325.4L832.1 325.9L831.4 324.6L830.9 324.2L826.9 322.8L822.1 325.1L822.9 325.2L826.5 324.0L826.7 324.1L826.6 324.3L822.7 326.3L822.9 326.5L822.9 326.6L822.2 326.8Z" fill="#1967d2"/><path d="M819.8 347.8L820.1 350.0L826.2 358.5L829.5 361.8L831.9 361.0L822.9 349.9L819.9 347.7Z" fill="#1967d2"/><path d="M836.1 354.4L836.8 356.6L839.5 358.6L842.9 359.3L844.9 356.6L846.2 353.3L845.5 349.8L842.6 350.5L839.4 351.8Z" fill="#1967d2"/><path d="M832.4 363.0L832.4 364.7L839.0 365.8L839.3 364.0Z" fill="#1967d2"/><path d="M848.1 356.7L848.1 358.9L850.3 359.6L850.6 357.2Z" fill="#1967d2"/><path d="M869.4 359.5L870.1 361.6L872.0 362.9L873.3 365.5L875.7 365.5L875.0 358.7L872.2 357.3Z" fill="#1967d2"/><path d="M875.6 359.2L876.3 366.2L879.1 365.5L881.5 366.1L884.4 368.3L884.7 368.1L881.9 362.5L879.3 359.9Z" fill="#8ab4f8"/><path d="M848.1 330.3L848.1 333.0L849.6 333.6L850.0 330.9Z" fill="#1967d2"/><path d="M854.4 342.8L854.4 345.1L855.9 345.5L856.2 343.4Z" fill="#1967d2"/><path d="M846.2 295.4L846.9 299.1L849.5 299.7L850.9 297.3L849.5 294.4Z" fill="#e0e2e6"/><path d="M849.0 300.1L849.4 304.3L851.5 305.6L852.8 302.9L851.8 299.8Z" fill="#1967d2"/><path d="M861.4 298.9L860.0 304.3L862.2 305.7L865.7 304.4L866.3 300.3L864.9 296.8Z" fill="#1967d2"/><path d="M863.2 288.7L863.5 291.1L866.0 291.3L866.4 289.1Z" fill="#1967d2"/><path d="M838.0 403.0L839.6 403.8L842.9 402.5L846.6 400.6L851.0 399.4L855.3 398.8L858.9 400.0L861.5 402.6L863.9 401.4L866.3 409.3L869.0 410.7L872.9 410.7L877.4 408.7L882.5 401.1L885.1 396.7L885.7 391.5L881.9 383.9L879.4 380.1L878.2 375.2L876.7 371.5L876.4 371.5L875.7 375.8L874.0 379.2L871.2 377.5L868.7 375.1L866.7 371.4L862.1 371.8L858.9 374.3L854.5 375.6L851.3 379.4L848.2 382.5L843.9 383.7L839.3 386.3L838.4 391.5L838.7 397.8Z" fill="#1967d2"/><path d="M868.8 416.4L869.1 419.6L871.2 418.8L872.0 415.6Z" fill="#1967d2"/><path d="M905.0 415.4L906.8 417.1L909.4 413.4L907.9 412.5Z" fill="#1967d2"/><path d="M891.2 426.1L892.9 427.3L900.7 421.9L902.2 418.8L902.0 418.7L899.0 420.2L895.3 422.7Z" fill="#1967d2"/><path d="M599.3 352.5L599.7 353.8L600.3 353.6L602.0 355.3L601.3 356.0L603.0 357.7L603.5 357.9L604.4 357.0L606.3 357.5L606.8 357.8L606.3 358.9L608.1 359.3L608.7 359.0L609.5 358.2L609.2 357.1L611.9 353.7L612.8 353.1L613.1 353.4L613.8 350.0L613.0 351.2L612.8 351.2L612.3 350.8L612.5 350.1L610.5 347.4L608.3 346.5L607.5 345.9L606.2 342.6L606.9 342.0L606.0 341.1L604.9 341.8L604.0 341.0L600.6 343.7L599.9 350.2L600.6 352.1Z" fill="#1967d2"/><path d="M605.0 341.9L606.1 343.1L607.4 346.2L608.3 346.5L610.0 347.9L612.3 350.7L612.1 352.0L611.9 352.2L613.1 353.4L613.3 352.8L613.9 352.4L614.1 352.6L614.9 350.6L615.7 349.3L619.1 348.6L619.9 349.0L620.1 349.5L621.3 348.0L621.3 346.1L622.5 346.4L622.6 346.1L622.6 345.5L622.3 345.0L621.4 344.7L620.5 344.8L618.6 342.3L614.1 341.7L609.6 340.4L607.0 342.0L606.0 341.1Z" fill="#4285f4"/><path d="M620.0 347.6L620.1 349.5L620.4 349.3L621.7 349.9L622.6 351.7L623.0 351.8L626.6 352.4L630.3 352.4L633.6 351.0L634.0 350.3L634.0 349.8L632.6 350.0L629.2 348.0L625.4 347.3L622.6 346.4L622.4 345.1L621.5 344.7L620.6 344.9L621.3 345.8Z" fill="#8ab4f8"/><path d="M596.1 358.2L596.3 359.2L596.8 359.7L596.8 359.3L599.2 359.0L600.3 359.3L602.4 357.2L603.5 357.9L604.3 357.0L604.4 356.2L604.2 355.6L602.4 355.3L601.2 354.1L600.6 352.3L599.9 352.3L599.3 352.5L599.7 353.8L596.7 355.0L597.3 357.8Z" fill="#4285f4"/><path d="M596.1 358.2L596.3 359.2L596.8 359.7L598.1 363.5L603.8 372.9L607.6 376.1L609.9 377.5L609.9 379.0L610.9 379.5L611.9 379.3L612.3 378.7L612.6 377.1L611.7 376.4L611.6 375.7L611.8 374.0L611.3 370.6L612.6 370.1L612.4 368.9L611.5 367.9L610.2 368.4L605.6 363.9L607.5 359.4L608.4 359.2L609.5 358.2L609.2 357.2L608.7 356.8L607.9 356.6L606.9 357.6L606.3 357.5L604.5 356.9L604.4 356.2L604.2 355.6L602.6 355.3L602.0 355.5L601.3 356.0L602.2 357.0L600.1 358.9L599.2 359.0L597.5 358.6L597.3 357.9Z" fill="#4285f4"/><path d="M605.5 364.0L610.1 368.6L609.9 369.3L610.0 370.3L611.0 370.6L612.6 370.1L612.5 368.9L614.6 368.1L617.6 370.4L621.3 375.5L625.0 378.5L625.7 380.9L625.5 381.0L624.3 380.6L625.2 383.6L626.8 383.8L627.4 385.1L630.0 386.6L630.5 387.6L630.1 389.7L630.4 390.3L629.6 392.0L630.3 392.0L631.0 391.6L631.1 391.8L630.0 394.1L630.3 394.6L629.2 394.4L629.4 392.4L628.7 393.8L628.8 394.6L630.0 395.9L631.8 396.3L633.5 398.1L634.9 397.7L634.1 396.6L635.6 396.2L637.5 392.9L638.8 388.6L641.8 385.5L646.9 383.0L648.8 377.8L649.5 372.8L651.9 369.1L653.9 364.6L651.9 361.2L646.8 358.6L640.5 357.4L635.6 355.6L633.7 351.1L634.0 350.3L634.0 349.8L633.4 349.7L632.6 350.0L630.4 352.3L626.5 352.3L623.0 351.7L621.3 349.0L621.3 348.2L620.0 347.6L619.2 348.5L615.5 349.2L614.9 350.5L613.9 352.2L613.4 351.8L613.8 350.0L612.8 351.5L611.9 352.2L612.0 352.4L611.8 353.4L609.9 356.0L609.0 356.9L607.9 356.6L607.1 357.3L606.3 358.9L607.4 359.2L607.5 359.4ZM631.9 390.3L631.3 391.2L631.2 391.0L631.4 389.9L631.6 389.8Z" fill="#1967d2"/><path d="M609.9 370.3L611.3 370.7L611.5 375.7L611.4 376.4L610.4 376.8L611.3 380.8L611.3 379.6L612.2 379.2L612.5 380.4L613.4 381.3L613.8 383.6L614.3 384.1L614.8 384.3L617.0 384.7L619.1 384.4L619.9 384.8L620.9 383.8L620.6 383.4L621.2 381.7L621.7 381.2L624.7 382.1L625.2 383.6L626.5 383.9L627.4 383.4L627.6 382.6L627.1 381.6L626.0 381.1L625.6 378.8L621.8 375.7L618.0 370.6L614.7 368.0L612.4 368.8L611.5 367.9L610.6 368.2L610.0 369.0ZM615.1 383.2L615.2 383.1L616.2 383.2L616.3 383.4L615.2 383.7Z" fill="#8ab4f8"/><path d="M619.4 383.1L619.3 383.8L619.7 384.5L620.4 385.0L623.0 386.3L626.8 389.5L627.3 390.7L629.2 391.8L628.5 390.2L628.7 390.1L630.1 390.9L629.6 392.0L630.4 392.0L631.0 391.5L631.5 389.5L630.6 387.7L630.7 387.0L630.0 386.6L627.1 383.8L627.6 382.6L626.9 381.4L624.3 380.6L624.6 381.9L624.5 382.0L621.4 381.2L621.2 381.7L619.8 383.1ZM630.2 390.7L630.0 390.6L630.2 390.0L630.4 390.3Z" fill="#8ab4f8"/><path d="M627.5 397.9L627.9 398.3L628.5 400.8L629.0 401.2L630.1 401.5L629.8 400.1L632.4 400.7L633.9 398.4L633.7 398.0L634.9 397.7L633.9 396.6L632.7 396.9L630.6 394.7L628.3 394.3L627.9 394.4L627.5 396.6L627.7 397.4ZM629.6 395.6L629.5 395.8L629.1 395.8L629.0 395.3L629.2 395.2Z" fill="#4285f4"/><path d="M613.9 384.3L614.3 386.5L614.2 387.5L613.7 389.0L613.1 395.3L614.0 406.1L615.0 423.0L616.3 427.5L617.0 428.0L619.2 430.2L619.7 429.8L619.9 429.1L618.9 427.9L619.3 425.5L621.9 418.0L621.9 414.2L623.1 409.8L624.3 406.9L628.0 406.3L629.4 403.5L628.7 401.2L628.8 401.1L630.1 401.5L629.6 400.0L627.9 398.3L627.7 397.4L628.2 395.7L629.0 395.7L629.4 392.6L629.4 392.4L628.6 394.3L628.0 394.3L628.1 392.8L627.5 391.0L627.7 391.0L629.2 391.8L628.4 389.8L626.4 388.7L623.2 385.5L621.1 383.9L619.4 383.1L619.1 383.7L617.0 383.4L614.7 383.8ZM616.1 384.5L616.2 384.8L615.4 384.8L615.4 384.4Z" fill="#1967d2"/><path d="M609.9 377.5L609.9 379.0L611.0 379.6L611.3 380.9L611.5 387.8L611.0 407.9L611.8 417.9L613.1 425.5L615.7 430.6L618.9 433.9L621.4 433.9L619.9 430.9L619.3 430.3L619.9 429.1L618.8 428.0L618.5 429.0L616.8 427.8L615.3 422.9L614.6 415.9L613.3 395.3L614.2 387.5L615.0 385.1L615.4 385.0L615.0 382.9L613.4 381.3L613.3 380.8L612.2 379.0L612.6 377.1L612.5 376.9L611.7 376.5L610.7 376.6L610.4 376.8L610.6 377.8Z" fill="#4285f4"/><path d="M686.0 316.5L686.3 317.6L687.1 318.0L687.8 318.0L689.4 317.2L689.0 316.6L690.7 315.1L696.0 312.1L696.5 310.2L697.3 308.1L696.2 307.5L695.6 308.7L693.9 307.8L689.3 309.1L686.7 312.5L687.2 315.9Z" fill="#1967d2"/><path d="M686.5 317.8L687.2 318.1L688.1 317.9L689.8 320.1L689.1 321.3L691.8 323.4L691.8 322.5L692.0 322.3L694.6 323.8L700.0 327.9L702.4 329.3L702.2 330.7L703.0 331.1L703.7 331.1L704.9 330.4L704.8 329.2L710.3 325.6L711.2 326.1L711.9 326.1L712.7 325.5L713.1 324.9L713.1 324.2L712.7 323.3L711.4 323.5L710.9 322.2L709.7 316.3L709.8 314.0L710.6 313.2L710.2 310.9L708.9 311.1L708.6 309.3L707.3 306.0L707.5 305.9L708.8 306.3L708.3 305.2L707.6 304.7L706.5 304.8L706.1 305.3L705.9 306.1L701.3 306.6L697.3 308.0L696.2 307.5L695.7 308.7L696.7 309.3L696.1 311.1L690.7 315.1L688.6 316.2L687.7 315.9L686.7 316.8Z" fill="#1967d2"/><path d="M706.0 306.1L707.2 306.0L707.4 306.3L708.6 312.4L708.5 314.4L709.3 314.3L710.6 313.2L710.5 312.4L711.2 312.5L711.5 312.2L711.8 311.4L710.4 310.9L709.8 306.7L708.8 306.3L708.1 305.0L707.5 304.7L706.6 304.7L706.1 305.3Z" fill="#1967d2"/><path d="M708.5 314.4L709.4 314.5L709.6 317.0L710.5 321.2L711.2 323.5L710.0 324.3L710.3 325.4L710.7 325.9L711.3 326.1L711.9 326.1L712.8 325.4L713.2 324.6L715.3 324.2L715.5 324.4L715.5 325.1L716.4 324.9L717.8 325.5L717.5 324.5L717.7 324.4L726.7 327.6L726.8 328.8L728.5 329.3L729.3 329.2L729.3 327.7L728.6 326.7L729.9 326.7L729.8 324.1L729.3 324.0L729.3 314.1L728.8 313.2L728.3 312.9L728.0 314.0L727.8 314.1L724.0 311.6L716.4 314.1L711.4 312.6L711.3 312.4L711.7 311.9L711.8 311.4L709.9 310.9L708.9 311.3L709.2 312.7L708.8 313.0L708.6 312.4Z" fill="#8ab4f8"/><path d="M728.1 313.5L728.5 324.0L728.0 324.1L728.0 325.4L728.1 325.7L728.2 325.4L728.6 325.5L728.6 326.5L729.9 326.7L729.9 325.6L730.0 325.4L741.0 325.4L741.7 326.6L742.3 326.2L742.6 325.5L742.0 324.5L741.0 324.0L740.0 318.7L738.0 314.1L729.3 313.7L728.3 312.9Z" fill="#1967d2"/><path d="M677.1 333.6L677.6 334.2L678.7 334.6L680.7 334.2L686.4 334.8L688.7 335.8L691.1 335.4L691.0 335.3L690.9 334.3L691.1 334.1L690.5 322.7L690.7 322.5L691.8 323.4L691.7 320.7L690.9 320.2L690.0 320.1L688.3 318.0L688.3 317.7L689.4 317.2L688.4 316.1L687.7 315.9L686.0 316.5L686.3 317.7L684.3 318.6L680.5 322.4L677.9 326.9L677.9 330.1L678.4 333.2ZM689.6 334.5L689.4 334.7L689.2 334.5L689.4 334.4Z" fill="#aecbfa"/><path d="M689.1 321.3L690.5 322.4L690.8 334.1L689.6 334.3L689.7 336.3L693.9 338.0L699.2 337.5L703.4 335.9L703.0 334.1L703.4 331.2L704.9 330.4L704.9 329.6L704.5 329.1L703.6 328.4L702.4 329.2L691.8 321.7L691.7 320.7L691.0 320.3L690.4 320.1L689.8 320.3L689.3 320.8ZM702.1 335.9L701.9 336.0L699.9 336.2L699.8 336.0L701.8 335.2Z" fill="#aecbfa"/><path d="M701.9 335.1L702.5 337.9L703.2 338.6L703.3 338.4L708.3 336.7L712.8 338.0L714.0 338.9L715.9 338.1L715.5 337.0L716.1 336.6L717.4 328.8L717.0 327.4L716.9 325.3L717.0 325.2L717.8 325.5L717.1 323.3L716.2 322.8L715.8 323.2L715.4 323.8L713.2 324.4L712.7 323.3L711.1 323.6L710.0 324.3L710.2 325.6L704.6 329.0L703.6 328.4L702.8 328.9L702.4 329.5L702.2 330.7L703.4 331.3L702.9 334.6ZM711.3 324.1L711.6 324.0L711.7 324.6L711.4 324.7ZM703.0 337.1L702.7 336.2L703.3 336.0L703.6 336.9Z" fill="#aecbfa"/><path d="M714.3 337.3L715.2 339.8L715.5 340.0L715.6 340.8L717.3 344.1L718.4 343.7L718.8 344.3L725.2 341.1L726.6 341.6L726.9 341.4L727.5 340.4L727.2 337.0L727.4 336.4L728.0 329.3L729.3 329.2L729.4 327.9L729.2 327.3L728.6 326.9L728.7 327.9L728.2 327.9L728.1 326.7L726.8 326.2L726.7 327.4L724.0 326.7L717.4 323.9L716.8 323.1L716.1 322.9L715.5 323.7L715.5 325.1L716.3 325.1L717.0 327.4L717.2 330.1L715.6 336.8ZM716.5 342.1L716.7 340.7L716.9 340.6L717.9 342.5L716.8 342.9ZM715.8 338.1L716.1 338.5L716.0 338.7L715.6 338.4Z" fill="#aecbfa"/><path d="M726.1 340.0L726.3 340.9L726.8 341.5L730.3 342.7L729.9 342.1L730.1 341.7L736.5 342.4L740.2 341.1L740.4 341.2L740.3 341.9L741.4 341.3L741.8 340.8L741.9 340.0L744.3 336.9L744.6 335.2L743.7 332.7L744.9 332.4L745.0 331.4L745.0 331.1L743.7 331.2L741.7 326.8L742.4 326.1L742.6 325.5L742.0 324.5L741.0 324.1L741.3 325.2L741.1 325.4L730.0 325.4L729.9 325.3L729.8 324.1L728.0 324.1L728.1 326.5L726.8 326.2L726.8 328.8L728.0 329.3L727.2 337.0ZM743.4 336.2L743.2 336.1L743.3 335.8L743.5 336.0Z" fill="#aecbfa"/><path d="M743.2 335.3L744.0 337.4L747.9 336.7L748.6 337.2L749.1 336.9L749.5 336.3L748.0 335.3L746.8 332.0L745.0 332.3L745.0 331.1L743.7 331.3Z" fill="#e0e2e6"/><path d="M740.3 341.9L740.8 341.9L741.4 343.7L741.2 344.6L741.8 345.3L741.3 346.7L742.9 348.8L744.1 349.5L748.0 349.9L748.8 351.0L752.0 350.7L754.2 348.6L756.8 347.3L758.5 345.1L760.1 345.3L760.8 344.4L761.0 343.8L760.8 343.1L760.3 342.6L760.0 343.9L759.1 343.6L759.0 343.4L759.6 342.4L758.2 342.1L757.5 343.3L755.5 343.0L752.3 340.3L752.4 340.1L754.1 340.2L752.5 338.8L751.5 338.8L750.7 339.0L748.7 337.4L749.5 336.3L748.6 335.6L748.1 335.4L748.1 336.0L745.2 336.7L744.8 335.9L743.1 336.3L741.0 339.7L740.6 339.7ZM750.3 350.5L750.1 350.5L749.6 349.7L751.0 349.5L751.1 349.7ZM742.4 348.0L742.2 347.8L742.8 346.7L743.9 348.0L743.7 348.1Z" fill="#1967d2"/><path d="M750.8 339.1L751.7 339.9L751.6 340.3L755.2 343.3L757.1 343.6L756.4 344.8L757.9 345.0L758.9 343.8L759.3 343.9L759.4 344.1L758.6 345.1L760.1 345.3L761.1 343.6L761.3 344.0L760.9 344.9L761.1 344.6L761.3 344.3L761.9 341.1L761.6 340.1L761.2 339.7L760.0 339.6L759.0 340.4L754.2 340.2L752.5 338.8L751.5 338.8ZM761.1 342.9L760.8 343.1L760.3 342.5L760.6 341.6L760.8 341.7Z" fill="#e0e2e6"/><path d="M749.2 351.5L750.0 352.8L749.7 354.6L750.8 356.1L751.1 354.6L751.2 354.6L751.5 355.0L755.6 352.3L759.4 348.5L761.3 344.3L761.9 341.1L761.5 339.9L760.9 339.6L760.4 339.5L759.7 339.7L759.3 340.0L759.1 340.4L760.6 340.5L760.7 340.7L760.3 340.8L759.6 342.3L758.2 342.1L757.5 343.3L757.7 343.6L757.3 343.6L756.4 344.8L757.7 345.1L756.4 346.8L754.2 348.6L752.9 349.2L751.4 349.4ZM751.5 350.7L751.7 350.9L751.0 351.6L750.5 351.0L750.6 350.8Z" fill="#4285f4"/><path d="M740.5 349.9L741.1 349.9L741.2 350.0L741.2 354.1L740.6 354.4L741.9 356.9L746.8 360.0L746.9 360.6L747.6 360.6L748.0 360.4L748.2 360.3L748.1 359.8L747.6 358.9L749.4 356.6L749.7 354.9L749.9 354.9L750.8 356.1L751.1 354.3L750.0 352.7L750.9 351.7L749.4 349.7L747.8 349.9L744.4 348.2L742.0 347.9L741.5 348.0L740.8 348.6ZM749.4 351.0L749.6 351.2L749.2 351.5L749.0 351.1ZM742.1 348.1L742.3 348.1L743.4 349.1L743.4 349.3L742.4 349.3L741.9 348.7ZM742.0 355.5L741.9 355.3L742.3 355.0L742.7 355.7L742.5 355.8Z" fill="#1967d2"/><path d="M735.4 350.5L735.9 350.6L736.3 352.1L736.0 353.4L736.7 354.4L736.3 356.0L737.0 356.6L737.5 356.9L738.1 356.8L741.7 355.4L742.3 354.9L741.2 352.7L741.9 349.4L742.4 349.3L741.9 348.8L741.4 348.6L740.5 348.6L736.9 349.0L736.6 348.6L735.8 349.2ZM741.1 355.3L741.0 355.6L737.9 356.0L737.7 355.9L737.9 355.5L740.5 354.4Z" fill="#4285f4"/><path d="M728.5 342.4L729.4 343.6L729.3 344.0L730.3 345.0L731.2 346.4L730.5 347.1L732.9 349.1L735.5 349.3L735.6 349.7L735.4 350.5L737.2 350.3L737.2 349.9L740.5 349.9L741.1 349.7L741.7 349.2L742.7 346.5L741.8 345.4L741.4 343.7L741.8 340.8L741.5 340.2L740.8 339.8L740.6 339.7L740.5 340.4L736.6 342.3L731.5 341.7L729.0 340.9ZM742.0 347.7L742.0 347.9L741.3 348.1L740.8 348.6L740.6 348.5L741.2 346.9ZM732.2 347.7L732.1 347.5L732.5 347.1L733.1 347.6L733.0 347.8Z" fill="#8ab4f8"/><path d="M715.5 344.6L715.8 344.6L716.8 348.3L716.4 349.1L718.1 349.8L719.9 349.5L720.0 349.6L719.7 350.4L720.0 350.5L720.5 350.5L722.4 349.9L722.6 349.5L725.2 348.6L730.3 348.9L732.5 347.1L730.3 345.0L729.4 343.7L729.8 342.6L730.3 342.7L729.6 341.6L729.1 341.2L726.1 340.0L726.1 340.4L724.3 341.4L718.6 343.6L717.9 342.5L716.3 343.1L715.6 343.7ZM730.8 347.4L730.7 347.6L730.1 347.5L730.5 347.1Z" fill="#e0e2e6"/><path d="M700.5 341.7L700.6 343.0L701.9 343.1L702.4 345.3L705.0 348.6L708.4 348.0L708.9 349.2L710.0 348.6L709.9 348.2L711.8 346.3L712.3 346.0L714.9 343.4L715.2 342.9L715.4 342.9L715.6 343.7L715.5 344.6L715.9 344.3L716.1 343.7L716.8 340.3L716.3 339.0L714.2 337.4L712.7 337.9L708.3 336.7L703.8 337.3L703.6 336.9L701.7 337.6L702.1 340.1L701.8 341.6ZM715.4 341.4L715.3 341.2L715.5 340.8L715.9 341.3ZM714.6 338.6L714.8 338.7L715.0 339.3L714.9 339.5L714.1 338.9Z" fill="#1967d2"/><path d="M708.6 347.9L708.5 348.5L708.9 349.2L710.0 348.7L711.3 350.5L713.6 350.9L713.2 351.2L711.5 351.8L714.2 352.2L715.8 351.1L716.1 351.2L716.2 350.9L717.7 349.9L718.1 348.4L716.8 347.8L716.8 344.4L717.1 344.2L716.4 341.9L715.9 341.5L715.3 341.4L714.9 343.2L711.8 346.2ZM716.5 343.1L716.3 342.9L716.4 342.7L716.7 342.9Z" fill="#4285f4"/><path d="M693.5 343.2L694.2 343.2L694.8 347.8L694.7 348.0L693.5 348.1L693.9 348.9L694.5 349.2L695.1 349.2L695.8 348.8L696.2 348.0L697.9 348.0L697.9 343.1L699.2 343.0L699.2 341.7L695.3 341.7L694.6 341.1L693.7 341.1L693.5 341.6Z" fill="#1967d2"/><path d="M687.5 346.9L688.1 349.1L688.8 347.4L689.3 348.6L693.4 348.1L693.8 348.8L694.3 349.2L695.0 349.2L695.6 349.0L696.0 348.5L696.1 348.0L694.8 347.8L694.8 343.1L695.5 343.0L695.2 341.6L694.6 341.1L693.7 341.1L693.4 341.9L687.9 343.0L688.1 344.2Z" fill="#8ab4f8"/><path d="M677.1 333.6L677.5 334.1L678.2 334.5L678.1 334.7L677.2 334.9L677.9 337.8L680.5 341.6L683.6 345.4L687.2 348.2L687.3 347.4L687.6 347.4L688.1 349.1L688.4 348.6L688.8 346.9L688.2 344.2L688.5 343.0L693.4 342.4L693.5 342.5L693.5 343.2L695.5 343.0L695.4 341.7L697.8 341.7L697.9 341.9L697.9 343.0L699.2 343.0L699.3 341.8L700.3 341.7L700.6 343.0L701.9 343.0L701.8 341.8L702.4 341.7L702.1 340.1L702.4 338.7L703.2 338.6L702.8 336.7L702.1 336.1L698.9 336.2L693.9 337.9L691.1 336.6L691.0 335.6L691.1 335.4L688.8 334.5L686.3 334.8L681.3 334.2L678.8 333.3ZM701.7 337.3L700.2 337.4L700.1 337.3L702.1 336.5L702.3 337.3L701.8 337.5ZM689.1 335.7L689.7 335.8L689.7 336.1L689.1 335.9Z" fill="#aecbfa"/><path d="M716.7 361.5L716.8 362.2L717.2 362.7L719.0 362.4L721.6 363.7L725.3 363.7L725.6 364.4L725.8 367.3L727.2 368.3L727.1 366.9L727.3 366.8L729.9 368.5L729.8 368.7L728.7 369.3L729.6 369.8L734.1 370.6L734.9 370.4L735.3 369.9L735.0 369.6L735.0 367.8L735.8 366.2L736.3 366.0L737.0 366.7L737.5 365.4L737.4 364.4L737.1 364.4L736.0 361.5L736.9 357.5L737.3 357.4L737.8 355.5L736.8 354.4L736.8 353.9L736.3 352.1L736.8 350.4L737.2 350.3L736.6 348.6L735.8 349.2L735.2 349.2L733.4 347.8L729.9 347.6L728.4 348.6L724.0 348.0L722.5 348.5L722.2 348.3L720.5 348.9L720.1 349.3L719.7 350.4L720.8 350.5L720.6 351.7L719.2 355.4L717.3 359.2L717.0 359.3L716.8 360.7L718.1 360.3L718.1 361.2ZM730.7 348.9L730.6 348.7L731.5 348.0L732.6 348.9L732.4 349.0Z" fill="#8ab4f8"/><path d="M709.8 353.8L710.5 357.3L713.9 359.9L716.9 359.3L717.0 359.5L716.8 360.7L717.8 360.4L718.2 360.1L718.7 357.0L719.9 354.1L720.6 351.7L721.1 350.3L722.4 349.9L722.6 349.3L722.5 348.7L722.2 348.3L720.7 348.8L720.1 349.2L718.2 348.5L717.1 348.7L716.4 349.1L716.5 349.3L716.1 350.9L715.7 351.1L713.9 350.8L713.2 351.2L711.5 351.8L713.8 352.1L713.9 352.3Z" fill="#aecbfa"/><path d="M712.3 376.5L712.7 377.2L713.6 377.5L713.8 377.5L713.6 377.0L713.7 376.9L722.9 376.9L723.0 377.5L725.6 377.5L726.5 377.1L726.8 376.0L726.2 372.0L727.5 371.3L727.3 369.9L726.3 370.5L726.1 370.4L725.9 367.6L726.1 367.5L727.2 368.3L727.1 366.6L726.2 366.0L725.6 364.4L725.5 363.7L725.3 363.6L725.0 363.0L721.4 363.0L718.1 361.7L718.1 361.3L716.7 361.5L717.0 362.7L715.0 363.1L714.3 366.5L714.9 370.3L713.7 375.5L712.8 375.8ZM724.3 376.4L724.4 376.2L725.5 376.2L725.9 377.1L724.4 377.4Z" fill="#8ab4f8"/><path d="M725.5 376.0L725.8 376.9L726.4 377.4L730.2 378.1L730.8 378.1L733.5 377.0L735.3 375.6L736.7 374.2L736.1 373.1L736.3 372.8L735.7 372.1L735.0 370.4L735.3 369.9L734.5 369.4L730.1 368.7L728.7 369.3L729.8 369.9L729.8 370.2L727.7 371.2L727.4 371.1L727.3 369.9L726.1 370.6L726.2 371.5ZM729.9 377.1L730.0 376.8L730.3 376.8L731.9 376.2L732.1 376.3L730.6 377.7ZM726.6 376.9L727.0 376.2L728.8 376.5L728.9 376.7L726.7 377.1Z" fill="#4285f4"/><path d="M735.6 359.0L736.1 364.6L735.9 364.8L736.7 366.4L737.0 366.7L737.4 365.8L737.9 365.7L738.9 366.6L739.6 368.8L741.1 369.9L748.0 369.3L748.3 368.0L747.1 368.1L747.0 367.9L747.5 365.3L747.0 360.8L748.2 360.3L748.0 359.5L747.7 359.0L747.2 359.3L743.2 356.7L742.9 356.0L742.1 355.6L741.6 355.5L736.3 356.3ZM737.4 357.0L741.1 355.6L741.7 356.6L741.6 356.8L737.5 357.4ZM741.0 368.7L740.8 368.5L741.0 368.3L741.2 368.5Z" fill="#4285f4"/><path d="M736.8 383.0L736.8 387.0L737.3 387.9L738.1 388.2L738.1 386.9L741.2 386.9L741.9 381.7L745.5 378.0L748.8 374.1L748.0 369.2L748.3 368.0L746.9 368.1L746.7 368.7L741.4 368.7L740.8 368.8L740.3 369.2L740.0 370.1L740.5 374.6L740.4 375.6L739.7 376.0L739.0 375.7L738.8 377.3L738.3 378.3L738.7 378.4L738.7 380.3L738.1 381.7ZM738.1 386.7L737.8 386.8L737.0 384.7L738.0 383.7L738.1 383.8Z" fill="#8ab4f8"/><path d="M730.7 377.7L730.5 378.4L730.9 380.2L732.5 382.1L732.1 383.0L733.3 383.7L733.7 382.6L733.9 382.6L734.6 383.2L733.4 383.8L734.7 384.6L735.4 384.4L735.9 385.1L736.7 384.9L738.1 383.5L738.1 381.7L738.7 381.1L738.7 380.3L740.0 377.7L740.0 376.6L739.5 375.9L739.0 375.7L738.9 376.6L738.4 376.8L737.1 374.9L735.6 374.3L735.0 374.3L733.6 375.5L732.8 375.8ZM736.5 383.5L736.6 383.2L736.8 383.2L736.8 383.6ZM736.0 375.6L735.8 375.8L735.5 375.5L735.7 375.3ZM731.8 378.3L732.0 379.1L731.8 379.2L730.9 378.1L732.7 377.4L732.7 377.6Z" fill="#4285f4"/><path d="M712.3 376.5L712.7 377.2L713.8 377.6L715.5 382.9L716.8 387.9L718.8 391.9L718.0 393.0L718.8 393.3L719.7 393.0L722.6 390.7L723.7 390.0L723.9 388.1L723.2 388.1L723.1 388.0L723.7 378.9L724.3 378.7L724.2 376.4L724.2 376.2L713.8 376.2L713.6 376.1L713.7 375.6L713.5 375.6L712.8 375.8Z" fill="#8ab4f8"/><path d="M722.5 389.3L724.8 389.4L727.0 388.2L732.2 385.7L733.1 383.9L731.6 384.5L731.4 384.3L732.1 383.1L733.2 383.7L733.8 382.5L732.5 381.7L732.1 379.6L729.8 377.0L729.0 376.8L723.0 377.7L723.0 382.8ZM729.2 378.2L729.4 378.0L730.5 378.2L730.7 379.7L730.5 379.7ZM724.4 377.5L726.3 377.3L728.7 377.9L728.8 378.0L724.4 378.6Z" fill="#8ab4f8"/><path d="M718.0 393.0L719.3 393.3L719.9 396.7L721.0 400.0L724.0 400.0L729.1 398.8L733.0 396.2L736.2 392.4L736.9 387.7L737.0 387.6L737.5 388.0L738.1 388.2L738.1 387.4L736.5 383.5L735.9 383.8L734.8 383.1L733.4 383.8L734.5 384.5L734.5 384.7L732.5 385.5L732.4 385.3L733.1 383.9L731.2 384.7L730.5 386.2L726.6 388.1L724.5 388.1L722.4 389.3L722.3 390.6L719.0 391.9L718.3 392.5ZM736.8 387.0L736.5 387.0L735.8 385.3L736.7 384.9L736.8 385.1ZM724.0 389.9L723.8 389.8L723.8 389.5L724.3 389.5L724.4 389.7Z" fill="#1967d2"/><path d="M733.7 369.2L733.7 370.6L734.2 370.7L735.7 372.1L736.0 372.9L735.1 374.0L736.2 376.0L738.2 376.7L738.3 377.0L738.7 377.0L738.7 377.4L738.3 378.3L738.9 378.1L740.1 377.4L740.4 375.7L740.6 375.4L740.5 374.6L741.3 370.1L740.7 368.1L739.0 366.6L738.6 365.5L737.9 365.7L737.6 365.4L737.4 364.4L735.9 364.8L736.1 365.5L735.8 366.1L735.0 366.3L735.0 367.8L734.2 369.2ZM739.7 369.3L739.8 369.1L740.1 369.3L740.0 369.6L739.8 369.6ZM736.9 374.5L736.8 374.8L736.5 374.6L736.7 374.3Z" fill="#4285f4"/><path d="M731.0 392.9L730.7 394.5L732.3 395.5L733.9 394.2L732.9 392.2Z" fill="#ffffff"/><path d="M755.1 375.1L753.6 378.9L752.3 382.8L752.6 386.8L755.5 387.6L757.5 382.9L759.4 377.9L760.1 372.3L757.7 373.1Z" fill="#8ab4f8"/></g></svg>
</article>
</section>
<section aria-label="How are active users trending?">
<h2 class="t" style="left:25.30px;top:618px;font-size:14.4px;line-height:16px;height:16px;color:#27292d;letter-spacing:1.038px;-webkit-text-stroke:0.45px #27292d;transform:scaleY(1.12);transform-origin:0 13px;">HOW ARE ACTIVE USERS TRENDING?</h2>
<article aria-label="User activity over time">
<div class="card" style="left:24px;top:645px;width:607px;height:520px;"></div>
<h3 class="t" style="left:56.50px;top:680px;font-size:20.2px;line-height:22px;height:22px;color:#303236;letter-spacing:-0.009px;-webkit-text-stroke:0.25px #303236;transform:scaleY(0.928);transform-origin:0 18px;">User activity over time</h3>
<div class="pill" style="left:520px;top:678px;width:78px;height:36px"></div>
<svg style="left:528.40px;top:682.30px" width="26" height="26" viewBox="0 0 24 24"><circle cx="12" cy="12" r="9" fill="none" stroke="#137333" stroke-width="2"/><path d="M7.3 12.4l3.1 3.1 6.3-6.4" fill="none" stroke="#137333" stroke-width="2"/></svg>
<svg style="left:570.8px;top:693.9px" width="10.5" height="5.4" viewBox="0 0 10.5 5.4"><path d="M0 0H10.5L5.25 5.4Z" fill="#5f6368"/></svg>
<svg style="left:0;top:0" width="640" height="1116" viewBox="0 0 640 1116"><path d="M62.5 743.5H430.6M436 743.5H475.6" stroke="#e8eaed" stroke-width="1.2" fill="none"/><path d="M62.5 807H430.6M436 807H475.6" stroke="#e8eaed" stroke-width="1.2" fill="none"/><path d="M62.5 870.4H430.6M436 870.4H475.6" stroke="#e8eaed" stroke-width="1.2" fill="none"/><path d="M62.5 933.8H430.6M436 933.8H475.6" stroke="#e8eaed" stroke-width="1.2" fill="none"/><path d="M62.5 997.2H430.6M436 997.2H475.6" stroke="#e8eaed" stroke-width="1.2" fill="none"/><path d="M62.5 1060.4H430.6M436 1060.4H475.6" stroke="#e8eaed" stroke-width="1.2" fill="none"/><path d="M145.3 1060.4V1068" stroke="#e8eaed" stroke-width="1.2" fill="none"/><path d="M240.4 1060.4V1068" stroke="#e8eaed" stroke-width="1.2" fill="none"/><path d="M335.6 1060.4V1068" stroke="#e8eaed" stroke-width="1.2" fill="none"/><path d="M430.6 1060.4V1068" stroke="#e8eaed" stroke-width="1.2" fill="none"/><path d="M62.9 1049.4L76.5 1049.4L90.1 1049.4L103.7 1049.4L117.3 1050.8L130.9 1053.5L144.5 1051.8L158.1 1049.4L171.6 1049.4L185.2 1049.4L198.8 1050.4L212.4 1050.8L226.0 1053.5L239.6 1053.5L253.2 1049.4L266.8 1049.4L280.4 1050.8L294.0 1049.4L307.6 1050.8L321.2 1053.5L334.8 1051.8L348.4 1049.4L361.9 1049.4L375.5 1049.4L389.1 1049.4L402.7 1050.8L416.3 1052.0L429.9 1052.0" stroke="#7b1fa2" stroke-width="2.8" fill="none" stroke-linejoin="round" stroke-linecap="butt"/><path d="M62.9 998.5L76.5 998.5L90.1 997.2L103.7 997.2L117.3 997.2L130.9 996.0L144.5 997.2L158.1 997.2L171.6 997.2L185.2 998.4L198.8 999.7L212.4 999.9L226.0 1001.1L239.6 1001.1L253.2 1001.1L266.8 1001.1L280.4 1001.1L294.0 999.9L307.6 999.9L321.2 999.9L334.8 999.9L348.4 998.5L361.9 998.4L375.5 997.2L389.1 997.2L402.7 997.2L416.3 997.2L429.9 997.2" stroke="#4f4fe0" stroke-width="2.8" fill="none" stroke-linejoin="round" stroke-linecap="butt"/><path d="M62.9 819.9L76.5 814.7L90.1 812.0L103.7 809.4L117.3 812.0L130.9 813.5L144.5 815.1L158.1 811.1L171.6 811.1L185.2 809.6L198.8 810.9L212.4 814.9L226.0 817.5L239.6 818.8L253.2 814.0L266.8 811.5L280.4 810.6L294.0 810.6L307.6 812.1L321.2 814.9L334.8 816.3L348.4 813.5L361.9 810.8L375.5 810.8L389.1 809.2L402.7 809.2L416.3 810.8L429.9 812.0" stroke="#1a73e8" stroke-width="2.8" fill="none" stroke-linejoin="round" stroke-linecap="butt"/><circle cx="508.3" cy="753.7" r="4.1" fill="#1a73e8"/><circle cx="508.3" cy="842.2" r="4.1" fill="#4b4be0"/><circle cx="508.3" cy="930.9" r="4.1" fill="#7b1fa2"/></svg>
<span class="t" style="left:440.50px;top:745px;font-size:15.4px;line-height:17px;height:17px;color:#5f6368;letter-spacing:-0.200px;transform:scaleY(1.04);transform-origin:0 14px;">500K</span>
<span class="t" style="left:440.50px;top:809px;font-size:15.4px;line-height:17px;height:17px;color:#5f6368;letter-spacing:-0.200px;transform:scaleY(1.04);transform-origin:0 14px;">400K</span>
<span class="t" style="left:440.50px;top:872px;font-size:15.4px;line-height:17px;height:17px;color:#5f6368;letter-spacing:-0.200px;transform:scaleY(1.04);transform-origin:0 14px;">300K</span>
<span class="t" style="left:440.50px;top:935px;font-size:15.4px;line-height:17px;height:17px;color:#5f6368;letter-spacing:-0.200px;transform:scaleY(1.04);transform-origin:0 14px;">200K</span>
<span class="t" style="left:440.50px;top:999px;font-size:15.4px;line-height:17px;height:17px;color:#5f6368;letter-spacing:-0.200px;transform:scaleY(1.04);transform-origin:0 14px;">100K</span>
<span class="t" style="left:467.20px;top:1042px;font-size:15.4px;line-height:17px;height:17px;color:#5f6368;transform:scaleY(1.04);transform-origin:0 14px;">0</span>
<span class="t" style="left:145.40px;top:1066px;font-size:15.4px;line-height:17px;height:17px;color:#5f6368;letter-spacing:-0.500px;transform:scaleY(1.04);transform-origin:0 14px;">04</span>
<span class="t" style="left:145.40px;top:1082px;font-size:15.4px;line-height:17px;height:17px;color:#5f6368;letter-spacing:-1.050px;transform:scaleY(1.04);transform-origin:0 14px;">Feb</span>
<span class="t" style="left:233.20px;top:1066px;font-size:15.4px;line-height:17px;height:17px;color:#5f6368;letter-spacing:-2.200px;transform:scaleY(1.04);transform-origin:0 14px;">11</span>
<span class="t" style="left:327.60px;top:1066px;font-size:15.4px;line-height:17px;height:17px;color:#5f6368;letter-spacing:-0.900px;transform:scaleY(1.04);transform-origin:0 14px;">18</span>
<span class="t" style="left:413.90px;top:1066px;font-size:15.4px;line-height:17px;height:17px;color:#5f6368;letter-spacing:-0.200px;transform:scaleY(1.04);transform-origin:0 14px;">25</span>
<span class="t" style="left:518.50px;top:745px;font-size:14.6px;line-height:16px;height:16px;color:#5f6368;letter-spacing:0.300px;-webkit-text-stroke:0.4px #5f6368;">30 DAYS</span>
<span class="t" style="left:519.20px;top:769px;font-size:25.5px;line-height:28px;height:28px;color:#202124;letter-spacing:-0.400px;transform:scaleY(1.15);transform-origin:0 23px;">391K</span>
<span class="t" style="left:519.00px;top:833px;font-size:14.6px;line-height:16px;height:16px;color:#5f6368;letter-spacing:0.040px;-webkit-text-stroke:0.4px #5f6368;">7 DAYS</span>
<span class="t" style="left:519.00px;top:857px;font-size:25.5px;line-height:28px;height:28px;color:#202124;letter-spacing:1.550px;transform:scaleY(1.15);transform-origin:0 23px;">99K</span>
<span class="t" style="left:519.50px;top:922px;font-size:14.6px;line-height:16px;height:16px;color:#5f6368;letter-spacing:-0.150px;-webkit-text-stroke:0.4px #5f6368;">1 DAY</span>
<span class="t" style="left:519.50px;top:945px;font-size:25.5px;line-height:28px;height:28px;color:#202124;letter-spacing:-1.450px;transform:scaleY(1.15);transform-origin:0 23px;">12K</span>
</article>
</section>
<section aria-label="How well do you retain your users?">
<h2 class="t" style="left:651.00px;top:618px;font-size:14.4px;line-height:16px;height:16px;color:#27292d;letter-spacing:0.967px;-webkit-text-stroke:0.45px #27292d;transform:scaleY(1.12);transform-origin:0 13px;">HOW WELL DO YOU RETAIN YOUR USERS?</h2>
<article aria-label="User activity by cohort">
<div class="card" style="left:650px;top:645px;width:606px;height:520px;"></div>
<h3 class="t" style="left:682.50px;top:680px;font-size:20.3px;line-height:22px;height:22px;color:#303236;letter-spacing:-0.009px;-webkit-text-stroke:0.3px #303236;transform:scaleY(0.924);transform-origin:0 18px;">User activity by cohort</h3>
<span class="t" style="left:682.50px;top:708px;font-size:16.2px;line-height:18px;height:18px;color:#5f6368;letter-spacing:-0.021px;">Based on device data only</span>
<div class="pill" style="left:1146px;top:678px;width:78px;height:36px"></div>
<svg style="left:1154.40px;top:682.30px" width="26" height="26" viewBox="0 0 24 24"><circle cx="12" cy="12" r="9" fill="none" stroke="#137333" stroke-width="2"/><path d="M7.3 12.4l3.1 3.1 6.3-6.4" fill="none" stroke="#137333" stroke-width="2"/></svg>
<svg style="left:1196.8px;top:693.9px" width="10.5" height="5.4" viewBox="0 0 10.5 5.4"><path d="M0 0H10.5L5.25 5.4Z" fill="#5f6368"/></svg>
<span class="t" style="left:833.75px;top:754px;font-size:14.7px;line-height:16px;height:16px;color:#3c4043;letter-spacing:-0.020px;transform:scaleY(1.117);transform-origin:0 13px;">Week 0</span>
<span class="t" style="left:900.00px;top:754px;font-size:14.5px;line-height:16px;height:16px;color:#3c4043;letter-spacing:0.020px;transform:scaleY(1.133);transform-origin:0 13px;">Week 1</span>
<span class="t" style="left:966.75px;top:754px;font-size:14.7px;line-height:16px;height:16px;color:#3c4043;letter-spacing:-0.020px;transform:scaleY(1.117);transform-origin:0 13px;">Week 2</span>
<span class="t" style="left:1033.20px;top:754px;font-size:14.7px;line-height:16px;height:16px;color:#3c4043;letter-spacing:-0.020px;transform:scaleY(1.117);transform-origin:0 13px;">Week 3</span>
<span class="t" style="left:1099.60px;top:754px;font-size:14.7px;line-height:16px;height:16px;color:#3c4043;letter-spacing:-0.020px;transform:scaleY(1.117);transform-origin:0 13px;">Week 4</span>
<span class="t" style="left:1166.00px;top:754px;font-size:14.7px;line-height:16px;height:16px;color:#3c4043;letter-spacing:0.030px;transform:scaleY(1.117);transform-origin:0 13px;">Week 5</span>
<span class="t" style="left:835.75px;top:795px;font-size:15.8px;line-height:17px;height:17px;color:#3c4043;letter-spacing:-0.020px;transform:scaleY(1.04);transform-origin:0 14px;">100.0%</span>
<span class="t" style="left:911.25px;top:795px;font-size:15.3px;line-height:17px;height:17px;color:#3c4043;letter-spacing:0.033px;transform:scaleY(1.073);transform-origin:0 14px;">2.8%</span>
<span class="t" style="left:978.00px;top:795px;font-size:15.1px;line-height:17px;height:17px;color:#3c4043;letter-spacing:0.033px;transform:scaleY(1.088);transform-origin:0 14px;">1.4%</span>
<span class="t" style="left:1044.50px;top:795px;font-size:15.2px;line-height:17px;height:17px;color:#3c4043;letter-spacing:0.050px;transform:scaleY(1.081);transform-origin:0 14px;">1.0%</span>
<span class="t" style="left:1110.75px;top:795px;font-size:15.3px;line-height:17px;height:17px;color:#3c4043;letter-spacing:0.033px;transform:scaleY(1.073);transform-origin:0 14px;">0.8%</span>
<span class="t" style="left:1177.00px;top:795px;font-size:15.3px;line-height:17px;height:17px;color:#3c4043;letter-spacing:0.033px;transform:scaleY(1.073);transform-origin:0 14px;">0.6%</span>
<span class="t" style="left:683.75px;top:794px;font-size:16.3px;line-height:18px;height:18px;color:#3c4043;letter-spacing:0.006px;">All Users</span>
<span class="t" style="left:683.75px;top:840px;font-size:16.5px;line-height:18px;height:18px;color:#3c4043;">Jan 14 - Jan 20</span>
<span class="t" style="left:683.75px;top:885px;font-size:16.5px;line-height:18px;height:18px;color:#3c4043;">Jan 21 - Jan 27</span>
<span class="t" style="left:683.75px;top:931px;font-size:16.2px;line-height:18px;height:18px;color:#3c4043;letter-spacing:-0.019px;">Jan 28 - Feb 3</span>
<span class="t" style="left:683.75px;top:977px;font-size:15.9px;line-height:17px;height:17px;color:#3c4043;transform:scaleY(1.033);transform-origin:0 14px;">Feb 4 - Feb 10</span>
<span class="t" style="left:683.75px;top:1022px;font-size:16.1px;line-height:18px;height:18px;color:#3c4043;letter-spacing:-0.011px;transform:scaleY(1.02);transform-origin:0 15px;">Feb 11 - Feb 17</span>
<span class="t" style="left:683.75px;top:1068px;font-size:16px;line-height:17px;height:17px;color:#3c4043;">Feb 18 - Feb 24</span>
<svg style="left:0;top:0" width="1280" height="1116" viewBox="0 0 1280 1116"><path d="M681.8 737.7H1224" stroke="#dadce0" stroke-width="1.3" fill="none"/><path d="M681.8 780.5H1224" stroke="#dadce0" stroke-width="1.3" fill="none"/><path d="M681.8 826.4H1224" stroke="#dadce0" stroke-width="1.3" fill="none"/><rect x="827.00" y="828.4" width="62.3" height="41.3" fill="#174ea6"/><rect x="893.45" y="828.4" width="62.3" height="41.3" fill="#1967d2"/><rect x="959.90" y="828.4" width="62.3" height="41.3" fill="#8ab4f8"/><rect x="1026.35" y="828.4" width="62.3" height="41.3" fill="#8ab4f8"/><rect x="1092.80" y="828.4" width="62.3" height="41.3" fill="#8ab4f8"/><rect x="1159.25" y="828.4" width="62.3" height="41.3" fill="#8ab4f8"/><path d="M681.8 871.9H1224" stroke="#dfe1e5" stroke-width="1.5" fill="none"/><rect x="827.00" y="873.9" width="62.3" height="41.3" fill="#174ea6"/><rect x="893.45" y="873.9" width="62.3" height="41.3" fill="#1967d2"/><rect x="959.90" y="873.9" width="62.3" height="41.3" fill="#8ab4f8"/><rect x="1026.35" y="873.9" width="62.3" height="41.3" fill="#8ab4f8"/><rect x="1092.80" y="873.9" width="62.3" height="41.3" fill="#8ab4f8"/><path d="M681.8 917.4H1224" stroke="#dfe1e5" stroke-width="1.5" fill="none"/><rect x="827.00" y="919.4" width="62.3" height="41.3" fill="#174ea6"/><rect x="893.45" y="919.4" width="62.3" height="41.3" fill="#1967d2"/><rect x="959.90" y="919.4" width="62.3" height="41.3" fill="#8ab4f8"/><rect x="1026.35" y="919.4" width="62.3" height="41.3" fill="#8ab4f8"/><path d="M681.8 962.9H1224" stroke="#dfe1e5" stroke-width="1.5" fill="none"/><rect x="827.00" y="964.9" width="62.3" height="41.3" fill="#174ea6"/><rect x="893.45" y="964.9" width="62.3" height="41.3" fill="#1967d2"/><rect x="959.90" y="964.9" width="62.3" height="41.3" fill="#8ab4f8"/><path d="M681.8 1008.4H1224" stroke="#dfe1e5" stroke-width="1.5" fill="none"/><rect x="827.00" y="1010.4" width="62.3" height="41.3" fill="#174ea6"/><rect x="893.45" y="1010.4" width="62.3" height="41.3" fill="#1967d2"/><path d="M681.8 1053.9H1224" stroke="#dfe1e5" stroke-width="1.5" fill="none"/><rect x="827.00" y="1055.9" width="62.3" height="41.3" fill="#174ea6"/><path d="M681.8 1099.4H1224" stroke="#dfe1e5" stroke-width="1.5" fill="none"/></svg>
</article>
</section>
</main>
<div class="r" style="left:0;top:930px;width:1280px;height:186px;background:linear-gradient(to bottom, rgba(248,249,250,0) 0%, rgba(248,249,250,0.05) 18%, rgba(248,249,250,0.22) 42%, rgba(248,249,250,0.6) 66%, rgba(248,249,250,0.95) 88%, rgba(248,249,250,1) 94%)"></div>
</body></html>
